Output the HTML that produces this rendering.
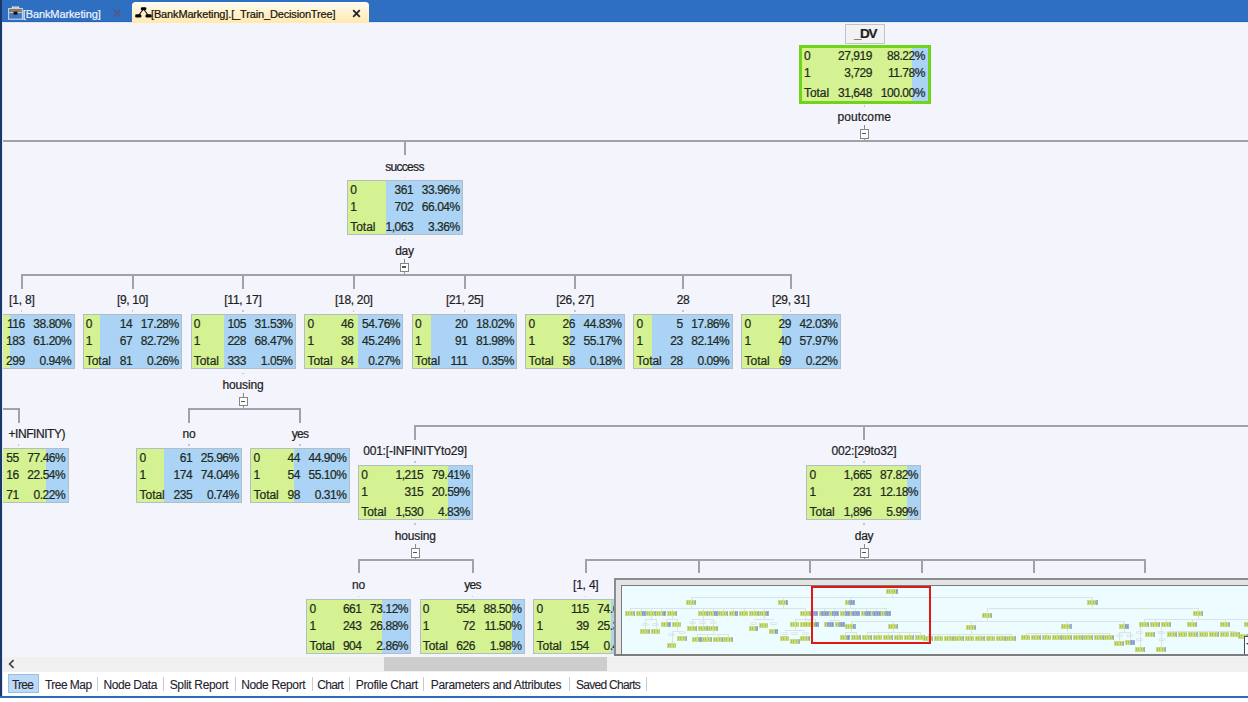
<!DOCTYPE html>
<html lang="en"><head><meta charset="utf-8"><title>[BankMarketing].[_Train_DecisionTree]</title>
<style>
html,body{margin:0;padding:0;}
body{width:1248px;height:702px;overflow:hidden;position:relative;background:#fff;font-family:"Liberation Sans", sans-serif;}
#app{position:absolute;left:0;top:0;width:1248px;height:702px;overflow:hidden;}
#app div,#app svg,#app span{position:absolute;}
#app span{white-space:nowrap;line-height:16px;height:16px;color:#1e1e1e;-webkit-text-stroke-width:0.22px;}
#app span.n{color:#1f2a1c;}
.cb{width:9.4px;height:9.4px;box-sizing:border-box;border:1.4px solid #868686;background:#fdfdfd;}
.cb i{position:absolute;left:1.2px;top:2.6px;width:4.2px;height:1.4px;background:#555;display:block;}
</style></head>
<body><div id="app">
<div style="left:0px;top:0px;width:1248px;height:702px;background:#ffffff;"></div>
<div style="left:3px;top:22px;width:1245px;height:635px;background:#f3f4fc;"></div>
<div style="left:3px;top:140px;width:1245px;height:2px;background:#a0a1a9;"></div>
<div style="left:404px;top:141px;width:2px;height:14px;background:#a0a1a9;"></div>
<div style="left:20.5px;top:274px;width:771.3px;height:2px;background:#a0a1a9;"></div>
<div style="left:20.5px;top:275px;width:2px;height:13.5px;background:#a0a1a9;"></div>
<div style="left:131.5px;top:275px;width:2px;height:13.5px;background:#a0a1a9;"></div>
<div style="left:242px;top:275px;width:2px;height:13.5px;background:#a0a1a9;"></div>
<div style="left:352.8px;top:275px;width:2px;height:13.5px;background:#a0a1a9;"></div>
<div style="left:463.7px;top:275px;width:2px;height:13.5px;background:#a0a1a9;"></div>
<div style="left:574px;top:275px;width:2px;height:13.5px;background:#a0a1a9;"></div>
<div style="left:682px;top:275px;width:2px;height:13.5px;background:#a0a1a9;"></div>
<div style="left:789.8px;top:275px;width:2px;height:13.5px;background:#a0a1a9;"></div>
<div style="left:188px;top:408px;width:113px;height:2px;background:#a0a1a9;"></div>
<div style="left:188px;top:409px;width:2px;height:13.5px;background:#a0a1a9;"></div>
<div style="left:299px;top:409px;width:2px;height:13.5px;background:#a0a1a9;"></div>
<div style="left:3px;top:408px;width:16.7px;height:2px;background:#a0a1a9;"></div>
<div style="left:17.7px;top:409px;width:2px;height:13.5px;background:#a0a1a9;"></div>
<div style="left:414px;top:425px;width:834px;height:2px;background:#a0a1a9;"></div>
<div style="left:414px;top:426px;width:2px;height:13.5px;background:#a0a1a9;"></div>
<div style="left:863px;top:426px;width:2px;height:13.5px;background:#a0a1a9;"></div>
<div style="left:357.5px;top:559px;width:116px;height:2px;background:#a0a1a9;"></div>
<div style="left:357.5px;top:560px;width:2px;height:13.3px;background:#a0a1a9;"></div>
<div style="left:471.5px;top:560px;width:2px;height:13.3px;background:#a0a1a9;"></div>
<div style="left:584.7px;top:559px;width:561.3px;height:2px;background:#a0a1a9;"></div>
<div style="left:584.7px;top:560px;width:2px;height:13.3px;background:#a0a1a9;"></div>
<div style="left:698px;top:560px;width:2px;height:13.3px;background:#a0a1a9;"></div>
<div style="left:809px;top:560px;width:2px;height:13.3px;background:#a0a1a9;"></div>
<div style="left:921px;top:560px;width:2px;height:13.3px;background:#a0a1a9;"></div>
<div style="left:1033px;top:560px;width:2px;height:13.3px;background:#a0a1a9;"></div>
<div style="left:1144px;top:560px;width:2px;height:13.3px;background:#a0a1a9;"></div>
<div style="left:845px;top:24px;width:40px;height:19.5px;background:#f2f2f2;box-sizing:border-box;border:1px solid #c4c4c8;"></div>
<div style="left:799px;top:45px;width:132px;height:59px;background:#d4f291;box-sizing:border-box;border:3px solid #6fd41a;background:linear-gradient(90deg,#d4f291 0,#d4f291 110px,#aad3f5 110px,#aad3f5 100%);"></div>
<div style="left:863.5px;top:125.3px;width:1.4px;height:4px;background:#8a8a8a;"></div>
<div style="left:863.5px;top:138.3px;width:1.4px;height:2px;background:#9a9a9a;"></div>
<div class="cb" style="left:859.5px;top:129.3px"><i></i></div>
<div style="left:347px;top:180px;width:116px;height:55px;background:#d4f291;box-sizing:border-box;border:1px solid #b2bec4;background:linear-gradient(90deg,#d4f291 0,#d4f291 38px,#aad3f5 38px,#aad3f5 100%);"></div>
<div style="left:404.1px;top:258.8px;width:1.4px;height:4px;background:#8a8a8a;"></div>
<div style="left:404.1px;top:271.8px;width:1.4px;height:2px;background:#9a9a9a;"></div>
<div class="cb" style="left:400.1px;top:262.8px"><i></i></div>
<div style="left:3px;top:314px;width:72px;height:55px;background:#d4f291;box-sizing:border-box;border:1px solid #b2bec4;border-left:none;background:linear-gradient(90deg,#d4f291 0,#d4f291 7px,#aad3f5 7px,#aad3f5 100%);"></div>
<div style="left:83px;top:314px;width:99px;height:55px;background:#d4f291;box-sizing:border-box;border:1px solid #b2bec4;background:linear-gradient(90deg,#d4f291 0,#d4f291 16px,#aad3f5 16px,#aad3f5 100%);"></div>
<div style="left:191px;top:314px;width:105px;height:55px;background:#d4f291;box-sizing:border-box;border:1px solid #b2bec4;background:linear-gradient(90deg,#d4f291 0,#d4f291 32px,#aad3f5 32px,#aad3f5 100%);"></div>
<div style="left:304px;top:314px;width:99px;height:55px;background:#d4f291;box-sizing:border-box;border:1px solid #b2bec4;background:linear-gradient(90deg,#d4f291 0,#d4f291 53px,#aad3f5 53px,#aad3f5 100%);"></div>
<div style="left:412px;top:314px;width:105px;height:55px;background:#d4f291;box-sizing:border-box;border:1px solid #b2bec4;background:linear-gradient(90deg,#d4f291 0,#d4f291 18px,#aad3f5 18px,#aad3f5 100%);"></div>
<div style="left:525px;top:314px;width:100px;height:55px;background:#d4f291;box-sizing:border-box;border:1px solid #b2bec4;background:linear-gradient(90deg,#d4f291 0,#d4f291 44px,#aad3f5 44px,#aad3f5 100%);"></div>
<div style="left:633px;top:314px;width:100px;height:55px;background:#d4f291;box-sizing:border-box;border:1px solid #b2bec4;background:linear-gradient(90deg,#d4f291 0,#d4f291 18px,#aad3f5 18px,#aad3f5 100%);"></div>
<div style="left:741px;top:314px;width:100px;height:55px;background:#d4f291;box-sizing:border-box;border:1px solid #b2bec4;background:linear-gradient(90deg,#d4f291 0,#d4f291 40px,#aad3f5 40px,#aad3f5 100%);"></div>
<div style="left:242.5px;top:393px;width:1.4px;height:4px;background:#8a8a8a;"></div>
<div style="left:242.5px;top:406px;width:1.4px;height:2px;background:#9a9a9a;"></div>
<div class="cb" style="left:238.5px;top:397px"><i></i></div>
<div style="left:3px;top:448px;width:66px;height:55px;background:#d4f291;box-sizing:border-box;border:1px solid #b2bec4;border-left:none;background:linear-gradient(90deg,#d4f291 0,#d4f291 43px,#aad3f5 43px,#aad3f5 100%);"></div>
<div style="left:136px;top:448px;width:106px;height:55px;background:#d4f291;box-sizing:border-box;border:1px solid #b2bec4;background:linear-gradient(90deg,#d4f291 0,#d4f291 27px,#aad3f5 27px,#aad3f5 100%);"></div>
<div style="left:250px;top:448px;width:100px;height:55px;background:#d4f291;box-sizing:border-box;border:1px solid #b2bec4;background:linear-gradient(90deg,#d4f291 0,#d4f291 43px,#aad3f5 43px,#aad3f5 100%);"></div>
<div style="left:358px;top:465px;width:115px;height:55px;background:#d4f291;box-sizing:border-box;border:1px solid #b2bec4;background:linear-gradient(90deg,#d4f291 0,#d4f291 89px,#aad3f5 89px,#aad3f5 100%);"></div>
<div style="left:414.7px;top:544.3px;width:1.4px;height:4px;background:#8a8a8a;"></div>
<div style="left:414.7px;top:557.3px;width:1.4px;height:2px;background:#9a9a9a;"></div>
<div class="cb" style="left:410.7px;top:548.3px"><i></i></div>
<div style="left:806px;top:465px;width:115px;height:55px;background:#d4f291;box-sizing:border-box;border:1px solid #b2bec4;background:linear-gradient(90deg,#d4f291 0,#d4f291 100px,#aad3f5 100px,#aad3f5 100%);"></div>
<div style="left:863.5px;top:544.3px;width:1.4px;height:4px;background:#8a8a8a;"></div>
<div style="left:863.5px;top:557.3px;width:1.4px;height:2px;background:#9a9a9a;"></div>
<div class="cb" style="left:859.5px;top:548.3px"><i></i></div>
<div style="left:306px;top:599px;width:105px;height:55px;background:#d4f291;box-sizing:border-box;border:1px solid #b2bec4;background:linear-gradient(90deg,#d4f291 0,#d4f291 75px,#aad3f5 75px,#aad3f5 100%);"></div>
<div style="left:420px;top:599px;width:105px;height:55px;background:#d4f291;box-sizing:border-box;border:1px solid #b2bec4;background:linear-gradient(90deg,#d4f291 0,#d4f291 91px,#aad3f5 91px,#aad3f5 100%);"></div>
<div style="left:533px;top:599px;width:106px;height:55px;background:#d4f291;box-sizing:border-box;border:1px solid #b2bec4;background:linear-gradient(90deg,#d4f291 0,#d4f291 77px,#aad3f5 77px,#aad3f5 100%);"></div>
<div style="left:863.8px;top:105px;width:1.4px;height:1.6px;background:#c3c5cf;"></div>
<div style="left:404.1px;top:176.5px;width:1.4px;height:1.6px;background:#c3c5cf;"></div>
<div style="left:404.1px;top:238.5px;width:1.4px;height:1.6px;background:#c3c5cf;"></div>
<div style="left:242.3px;top:372.5px;width:1.4px;height:1.6px;background:#c3c5cf;"></div>
<div style="left:414.3px;top:523px;width:1.4px;height:1.6px;background:#c3c5cf;"></div>
<div style="left:863.3px;top:523px;width:1.4px;height:1.6px;background:#c3c5cf;"></div>
<div style="left:21.1px;top:310.3px;width:1.4px;height:1.6px;background:#c3c5cf;"></div>
<div style="left:131.8px;top:310.3px;width:1.4px;height:1.6px;background:#c3c5cf;"></div>
<div style="left:242.3px;top:310.3px;width:1.4px;height:1.6px;background:#c3c5cf;"></div>
<div style="left:353.1px;top:310.3px;width:1.4px;height:1.6px;background:#c3c5cf;"></div>
<div style="left:464px;top:310.3px;width:1.4px;height:1.6px;background:#c3c5cf;"></div>
<div style="left:574.3px;top:310.3px;width:1.4px;height:1.6px;background:#c3c5cf;"></div>
<div style="left:682.3px;top:310.3px;width:1.4px;height:1.6px;background:#c3c5cf;"></div>
<div style="left:790.1px;top:310.3px;width:1.4px;height:1.6px;background:#c3c5cf;"></div>
<div style="left:18px;top:444.3px;width:1.4px;height:1.6px;background:#c3c5cf;"></div>
<div style="left:188.3px;top:444.3px;width:1.4px;height:1.6px;background:#c3c5cf;"></div>
<div style="left:299.3px;top:444.3px;width:1.4px;height:1.6px;background:#c3c5cf;"></div>
<div style="left:414.3px;top:461.3px;width:1.4px;height:1.6px;background:#c3c5cf;"></div>
<div style="left:863.3px;top:461.3px;width:1.4px;height:1.6px;background:#c3c5cf;"></div>
<div style="left:357.8px;top:595.8px;width:1.4px;height:1.6px;background:#c3c5cf;"></div>
<div style="left:471.8px;top:595.8px;width:1.4px;height:1.6px;background:#c3c5cf;"></div>
<div style="left:585.1px;top:595.8px;width:1.4px;height:1.6px;background:#c3c5cf;"></div>
<span class="t" style="left:854.0px;top:26.2px;font-size:13.5px;letter-spacing:-1.42px;font-weight:bold;">_DV</span>
<span class="n" style="left:804.0px;top:48.0px;font-size:12px;letter-spacing:-0.45px;">0</span>
<span class="n" style="left:838.0px;top:48.0px;font-size:12px;letter-spacing:-0.45px;">27,919</span>
<span class="n" style="left:887.0px;top:48.0px;font-size:12px;letter-spacing:-0.45px;">88.22%</span>
<span class="n" style="left:804.0px;top:64.9px;font-size:12px;letter-spacing:-0.45px;">1</span>
<span class="n" style="left:844.2px;top:64.9px;font-size:12px;letter-spacing:-0.45px;">3,729</span>
<span class="n" style="left:887.9px;top:64.9px;font-size:12px;letter-spacing:-0.45px;">11.78%</span>
<span class="n" style="left:804.0px;top:84.7px;font-size:12px;letter-spacing:-0.05px;">Total</span>
<span class="n" style="left:838.0px;top:84.7px;font-size:12px;letter-spacing:-0.45px;">31,648</span>
<span class="n" style="left:880.8px;top:84.7px;font-size:12px;letter-spacing:-0.45px;">100.00%</span>
<span class="t" style="left:837.5px;top:109.3px;font-size:12px;letter-spacing:0.10px;">poutcome</span>
<span class="t" style="left:385.2px;top:158.5px;font-size:12px;letter-spacing:-0.69px;">success</span>
<span class="n" style="left:350.3px;top:182.4px;font-size:12px;letter-spacing:-0.45px;">0</span>
<span class="n" style="left:394.6px;top:182.4px;font-size:12px;letter-spacing:-0.45px;">361</span>
<span class="n" style="left:421.8px;top:182.4px;font-size:12px;letter-spacing:-0.45px;">33.96%</span>
<span class="n" style="left:350.3px;top:199.3px;font-size:12px;letter-spacing:-0.45px;">1</span>
<span class="n" style="left:394.6px;top:199.3px;font-size:12px;letter-spacing:-0.45px;">702</span>
<span class="n" style="left:421.8px;top:199.3px;font-size:12px;letter-spacing:-0.45px;">66.04%</span>
<span class="n" style="left:350.3px;top:219.1px;font-size:12px;letter-spacing:-0.05px;">Total</span>
<span class="n" style="left:385.5px;top:219.1px;font-size:12px;letter-spacing:-0.45px;">1,063</span>
<span class="n" style="left:428.0px;top:219.1px;font-size:12px;letter-spacing:-0.45px;">3.36%</span>
<span class="t" style="left:395.2px;top:242.5px;font-size:12px;letter-spacing:-0.29px;">day</span>
<span class="t" style="left:9.1px;top:291.8px;font-size:12px;letter-spacing:-0.20px;">[1, 8]</span>
<span class="n" style="left:7.0px;top:316.4px;font-size:12px;letter-spacing:-0.45px;">116</span>
<span class="n" style="left:33.3px;top:316.4px;font-size:12px;letter-spacing:-0.45px;">38.80%</span>
<span class="n" style="left:6.1px;top:333.3px;font-size:12px;letter-spacing:-0.45px;">183</span>
<span class="n" style="left:33.3px;top:333.3px;font-size:12px;letter-spacing:-0.45px;">61.20%</span>
<span class="n" style="left:6.1px;top:353.1px;font-size:12px;letter-spacing:-0.45px;">299</span>
<span class="n" style="left:39.5px;top:353.1px;font-size:12px;letter-spacing:-0.45px;">0.94%</span>
<span class="t" style="left:117.0px;top:291.8px;font-size:12px;letter-spacing:-0.34px;">[9, 10]</span>
<span class="n" style="left:85.8px;top:316.4px;font-size:12px;letter-spacing:-0.45px;">0</span>
<span class="n" style="left:119.8px;top:316.4px;font-size:12px;letter-spacing:-0.45px;">14</span>
<span class="n" style="left:140.8px;top:316.4px;font-size:12px;letter-spacing:-0.45px;">17.28%</span>
<span class="n" style="left:85.8px;top:333.3px;font-size:12px;letter-spacing:-0.45px;">1</span>
<span class="n" style="left:119.8px;top:333.3px;font-size:12px;letter-spacing:-0.45px;">67</span>
<span class="n" style="left:140.8px;top:333.3px;font-size:12px;letter-spacing:-0.45px;">82.72%</span>
<span class="n" style="left:85.8px;top:353.1px;font-size:12px;letter-spacing:-0.05px;">Total</span>
<span class="n" style="left:119.8px;top:353.1px;font-size:12px;letter-spacing:-0.45px;">81</span>
<span class="n" style="left:147.0px;top:353.1px;font-size:12px;letter-spacing:-0.45px;">0.26%</span>
<span class="t" style="left:224.2px;top:291.8px;font-size:12px;letter-spacing:-0.21px;">[11, 17]</span>
<span class="n" style="left:193.8px;top:316.4px;font-size:12px;letter-spacing:-0.45px;">0</span>
<span class="n" style="left:227.4px;top:316.4px;font-size:12px;letter-spacing:-0.45px;">105</span>
<span class="n" style="left:254.6px;top:316.4px;font-size:12px;letter-spacing:-0.45px;">31.53%</span>
<span class="n" style="left:193.8px;top:333.3px;font-size:12px;letter-spacing:-0.45px;">1</span>
<span class="n" style="left:227.4px;top:333.3px;font-size:12px;letter-spacing:-0.45px;">228</span>
<span class="n" style="left:254.6px;top:333.3px;font-size:12px;letter-spacing:-0.45px;">68.47%</span>
<span class="n" style="left:193.8px;top:353.1px;font-size:12px;letter-spacing:-0.05px;">Total</span>
<span class="n" style="left:227.4px;top:353.1px;font-size:12px;letter-spacing:-0.45px;">333</span>
<span class="n" style="left:260.8px;top:353.1px;font-size:12px;letter-spacing:-0.45px;">1.05%</span>
<span class="t" style="left:335.1px;top:291.8px;font-size:12px;letter-spacing:-0.32px;">[18, 20]</span>
<span class="n" style="left:307.5px;top:316.4px;font-size:12px;letter-spacing:-0.45px;">0</span>
<span class="n" style="left:341.1px;top:316.4px;font-size:12px;letter-spacing:-0.45px;">46</span>
<span class="n" style="left:362.1px;top:316.4px;font-size:12px;letter-spacing:-0.45px;">54.76%</span>
<span class="n" style="left:307.5px;top:333.3px;font-size:12px;letter-spacing:-0.45px;">1</span>
<span class="n" style="left:341.1px;top:333.3px;font-size:12px;letter-spacing:-0.45px;">38</span>
<span class="n" style="left:362.1px;top:333.3px;font-size:12px;letter-spacing:-0.45px;">45.24%</span>
<span class="n" style="left:307.5px;top:353.1px;font-size:12px;letter-spacing:-0.05px;">Total</span>
<span class="n" style="left:341.1px;top:353.1px;font-size:12px;letter-spacing:-0.45px;">84</span>
<span class="n" style="left:368.3px;top:353.1px;font-size:12px;letter-spacing:-0.45px;">0.27%</span>
<span class="t" style="left:445.9px;top:291.8px;font-size:12px;letter-spacing:-0.32px;">[21, 25]</span>
<span class="n" style="left:415.0px;top:316.4px;font-size:12px;letter-spacing:-0.45px;">0</span>
<span class="n" style="left:455.0px;top:316.4px;font-size:12px;letter-spacing:-0.45px;">20</span>
<span class="n" style="left:476.0px;top:316.4px;font-size:12px;letter-spacing:-0.45px;">18.02%</span>
<span class="n" style="left:415.0px;top:333.3px;font-size:12px;letter-spacing:-0.45px;">1</span>
<span class="n" style="left:455.0px;top:333.3px;font-size:12px;letter-spacing:-0.45px;">91</span>
<span class="n" style="left:476.0px;top:333.3px;font-size:12px;letter-spacing:-0.45px;">81.98%</span>
<span class="n" style="left:415.0px;top:353.1px;font-size:12px;letter-spacing:-0.05px;">Total</span>
<span class="n" style="left:450.6px;top:353.1px;font-size:12px;letter-spacing:-0.45px;">111</span>
<span class="n" style="left:482.2px;top:353.1px;font-size:12px;letter-spacing:-0.45px;">0.35%</span>
<span class="t" style="left:556.2px;top:291.8px;font-size:12px;letter-spacing:-0.32px;">[26, 27]</span>
<span class="n" style="left:528.6px;top:316.4px;font-size:12px;letter-spacing:-0.45px;">0</span>
<span class="n" style="left:562.5px;top:316.4px;font-size:12px;letter-spacing:-0.45px;">26</span>
<span class="n" style="left:583.5px;top:316.4px;font-size:12px;letter-spacing:-0.45px;">44.83%</span>
<span class="n" style="left:528.6px;top:333.3px;font-size:12px;letter-spacing:-0.45px;">1</span>
<span class="n" style="left:562.5px;top:333.3px;font-size:12px;letter-spacing:-0.45px;">32</span>
<span class="n" style="left:583.5px;top:333.3px;font-size:12px;letter-spacing:-0.45px;">55.17%</span>
<span class="n" style="left:528.6px;top:353.1px;font-size:12px;letter-spacing:-0.05px;">Total</span>
<span class="n" style="left:562.5px;top:353.1px;font-size:12px;letter-spacing:-0.45px;">58</span>
<span class="n" style="left:589.7px;top:353.1px;font-size:12px;letter-spacing:-0.45px;">0.18%</span>
<span class="t" style="left:676.8px;top:291.8px;font-size:12px;letter-spacing:-0.43px;">28</span>
<span class="n" style="left:636.6px;top:316.4px;font-size:12px;letter-spacing:-0.45px;">0</span>
<span class="n" style="left:676.6px;top:316.4px;font-size:12px;letter-spacing:-0.45px;">5</span>
<span class="n" style="left:691.3px;top:316.4px;font-size:12px;letter-spacing:-0.45px;">17.86%</span>
<span class="n" style="left:636.6px;top:333.3px;font-size:12px;letter-spacing:-0.45px;">1</span>
<span class="n" style="left:670.3px;top:333.3px;font-size:12px;letter-spacing:-0.45px;">23</span>
<span class="n" style="left:691.3px;top:333.3px;font-size:12px;letter-spacing:-0.45px;">82.14%</span>
<span class="n" style="left:636.6px;top:353.1px;font-size:12px;letter-spacing:-0.05px;">Total</span>
<span class="n" style="left:670.3px;top:353.1px;font-size:12px;letter-spacing:-0.45px;">28</span>
<span class="n" style="left:697.5px;top:353.1px;font-size:12px;letter-spacing:-0.45px;">0.09%</span>
<span class="t" style="left:772.0px;top:291.8px;font-size:12px;letter-spacing:-0.32px;">[29, 31]</span>
<span class="n" style="left:744.6px;top:316.4px;font-size:12px;letter-spacing:-0.45px;">0</span>
<span class="n" style="left:778.6px;top:316.4px;font-size:12px;letter-spacing:-0.45px;">29</span>
<span class="n" style="left:799.6px;top:316.4px;font-size:12px;letter-spacing:-0.45px;">42.03%</span>
<span class="n" style="left:744.6px;top:333.3px;font-size:12px;letter-spacing:-0.45px;">1</span>
<span class="n" style="left:778.6px;top:333.3px;font-size:12px;letter-spacing:-0.45px;">40</span>
<span class="n" style="left:799.6px;top:333.3px;font-size:12px;letter-spacing:-0.45px;">57.97%</span>
<span class="n" style="left:744.6px;top:353.1px;font-size:12px;letter-spacing:-0.05px;">Total</span>
<span class="n" style="left:778.6px;top:353.1px;font-size:12px;letter-spacing:-0.45px;">69</span>
<span class="n" style="left:805.8px;top:353.1px;font-size:12px;letter-spacing:-0.45px;">0.22%</span>
<span class="t" style="left:222.5px;top:376.5px;font-size:12px;letter-spacing:-0.15px;">housing</span>
<span class="t" style="left:8.5px;top:425.6px;font-size:12px;letter-spacing:-0.45px;">+INFINITY)</span>
<span class="n" style="left:6.3px;top:450.4px;font-size:12px;letter-spacing:-0.45px;">55</span>
<span class="n" style="left:27.3px;top:450.4px;font-size:12px;letter-spacing:-0.45px;">77.46%</span>
<span class="n" style="left:6.3px;top:467.3px;font-size:12px;letter-spacing:-0.45px;">16</span>
<span class="n" style="left:27.3px;top:467.3px;font-size:12px;letter-spacing:-0.45px;">22.54%</span>
<span class="n" style="left:6.3px;top:487.1px;font-size:12px;letter-spacing:-0.45px;">71</span>
<span class="n" style="left:33.5px;top:487.1px;font-size:12px;letter-spacing:-0.45px;">0.22%</span>
<span class="t" style="left:182.5px;top:426.0px;font-size:12px;letter-spacing:-0.18px;">no</span>
<span class="n" style="left:139.6px;top:450.4px;font-size:12px;letter-spacing:-0.45px;">0</span>
<span class="n" style="left:179.8px;top:450.4px;font-size:12px;letter-spacing:-0.45px;">61</span>
<span class="n" style="left:200.8px;top:450.4px;font-size:12px;letter-spacing:-0.45px;">25.96%</span>
<span class="n" style="left:139.6px;top:467.3px;font-size:12px;letter-spacing:-0.45px;">1</span>
<span class="n" style="left:173.6px;top:467.3px;font-size:12px;letter-spacing:-0.45px;">174</span>
<span class="n" style="left:200.8px;top:467.3px;font-size:12px;letter-spacing:-0.45px;">74.04%</span>
<span class="n" style="left:139.6px;top:487.1px;font-size:12px;letter-spacing:-0.05px;">Total</span>
<span class="n" style="left:173.6px;top:487.1px;font-size:12px;letter-spacing:-0.45px;">235</span>
<span class="n" style="left:207.0px;top:487.1px;font-size:12px;letter-spacing:-0.45px;">0.74%</span>
<span class="t" style="left:291.8px;top:426.0px;font-size:12px;letter-spacing:-0.73px;">yes</span>
<span class="n" style="left:253.6px;top:450.4px;font-size:12px;letter-spacing:-0.45px;">0</span>
<span class="n" style="left:287.5px;top:450.4px;font-size:12px;letter-spacing:-0.45px;">44</span>
<span class="n" style="left:308.5px;top:450.4px;font-size:12px;letter-spacing:-0.45px;">44.90%</span>
<span class="n" style="left:253.6px;top:467.3px;font-size:12px;letter-spacing:-0.45px;">1</span>
<span class="n" style="left:287.5px;top:467.3px;font-size:12px;letter-spacing:-0.45px;">54</span>
<span class="n" style="left:308.5px;top:467.3px;font-size:12px;letter-spacing:-0.45px;">55.10%</span>
<span class="n" style="left:253.6px;top:487.1px;font-size:12px;letter-spacing:-0.05px;">Total</span>
<span class="n" style="left:287.5px;top:487.1px;font-size:12px;letter-spacing:-0.45px;">98</span>
<span class="n" style="left:314.7px;top:487.1px;font-size:12px;letter-spacing:-0.45px;">0.31%</span>
<span class="t" style="left:363.2px;top:442.8px;font-size:12px;letter-spacing:-0.20px;">001:[-INFINITYto29]</span>
<span class="n" style="left:361.3px;top:467.4px;font-size:12px;letter-spacing:-0.45px;">0</span>
<span class="n" style="left:395.5px;top:467.4px;font-size:12px;letter-spacing:-0.45px;">1,215</span>
<span class="n" style="left:431.8px;top:467.4px;font-size:12px;letter-spacing:-0.45px;">79.41%</span>
<span class="n" style="left:361.3px;top:484.3px;font-size:12px;letter-spacing:-0.45px;">1</span>
<span class="n" style="left:404.6px;top:484.3px;font-size:12px;letter-spacing:-0.45px;">315</span>
<span class="n" style="left:431.8px;top:484.3px;font-size:12px;letter-spacing:-0.45px;">20.59%</span>
<span class="n" style="left:361.3px;top:504.1px;font-size:12px;letter-spacing:-0.05px;">Total</span>
<span class="n" style="left:395.5px;top:504.1px;font-size:12px;letter-spacing:-0.45px;">1,530</span>
<span class="n" style="left:438.0px;top:504.1px;font-size:12px;letter-spacing:-0.45px;">4.83%</span>
<span class="t" style="left:394.8px;top:527.6px;font-size:12px;letter-spacing:-0.15px;">housing</span>
<span class="t" style="left:831.5px;top:442.8px;font-size:12px;letter-spacing:-0.14px;">002:[29to32]</span>
<span class="n" style="left:809.6px;top:467.4px;font-size:12px;letter-spacing:-0.45px;">0</span>
<span class="n" style="left:843.8px;top:467.4px;font-size:12px;letter-spacing:-0.45px;">1,665</span>
<span class="n" style="left:880.1px;top:467.4px;font-size:12px;letter-spacing:-0.45px;">87.82%</span>
<span class="n" style="left:809.6px;top:484.3px;font-size:12px;letter-spacing:-0.45px;">1</span>
<span class="n" style="left:852.9px;top:484.3px;font-size:12px;letter-spacing:-0.45px;">231</span>
<span class="n" style="left:880.1px;top:484.3px;font-size:12px;letter-spacing:-0.45px;">12.18%</span>
<span class="n" style="left:809.6px;top:504.1px;font-size:12px;letter-spacing:-0.05px;">Total</span>
<span class="n" style="left:843.8px;top:504.1px;font-size:12px;letter-spacing:-0.45px;">1,896</span>
<span class="n" style="left:886.3px;top:504.1px;font-size:12px;letter-spacing:-0.45px;">5.99%</span>
<span class="t" style="left:854.8px;top:527.6px;font-size:12px;letter-spacing:-0.29px;">day</span>
<span class="t" style="left:352.0px;top:577.0px;font-size:12px;letter-spacing:-0.18px;">no</span>
<span class="n" style="left:309.5px;top:601.4px;font-size:12px;letter-spacing:-0.45px;">0</span>
<span class="n" style="left:342.9px;top:601.4px;font-size:12px;letter-spacing:-0.45px;">661</span>
<span class="n" style="left:370.1px;top:601.4px;font-size:12px;letter-spacing:-0.45px;">73.12%</span>
<span class="n" style="left:309.5px;top:618.3px;font-size:12px;letter-spacing:-0.45px;">1</span>
<span class="n" style="left:342.9px;top:618.3px;font-size:12px;letter-spacing:-0.45px;">243</span>
<span class="n" style="left:370.1px;top:618.3px;font-size:12px;letter-spacing:-0.45px;">26.88%</span>
<span class="n" style="left:309.5px;top:638.1px;font-size:12px;letter-spacing:-0.05px;">Total</span>
<span class="n" style="left:342.9px;top:638.1px;font-size:12px;letter-spacing:-0.45px;">904</span>
<span class="n" style="left:376.3px;top:638.1px;font-size:12px;letter-spacing:-0.45px;">2.86%</span>
<span class="t" style="left:464.2px;top:577.0px;font-size:12px;letter-spacing:-0.73px;">yes</span>
<span class="n" style="left:422.8px;top:601.4px;font-size:12px;letter-spacing:-0.45px;">0</span>
<span class="n" style="left:456.3px;top:601.4px;font-size:12px;letter-spacing:-0.45px;">554</span>
<span class="n" style="left:483.5px;top:601.4px;font-size:12px;letter-spacing:-0.45px;">88.50%</span>
<span class="n" style="left:422.8px;top:618.3px;font-size:12px;letter-spacing:-0.45px;">1</span>
<span class="n" style="left:462.5px;top:618.3px;font-size:12px;letter-spacing:-0.45px;">72</span>
<span class="n" style="left:484.4px;top:618.3px;font-size:12px;letter-spacing:-0.45px;">11.50%</span>
<span class="n" style="left:422.8px;top:638.1px;font-size:12px;letter-spacing:-0.05px;">Total</span>
<span class="n" style="left:456.3px;top:638.1px;font-size:12px;letter-spacing:-0.45px;">626</span>
<span class="n" style="left:489.7px;top:638.1px;font-size:12px;letter-spacing:-0.45px;">1.98%</span>
<span class="t" style="left:573.0px;top:577.0px;font-size:12px;letter-spacing:-0.20px;">[1, 4]</span>
<span class="n" style="left:536.6px;top:601.4px;font-size:12px;letter-spacing:-0.45px;">0</span>
<span class="n" style="left:571.0px;top:601.4px;font-size:12px;letter-spacing:-0.45px;">115</span>
<span class="n" style="left:597.3px;top:601.4px;font-size:12px;letter-spacing:-0.45px;">74.68%</span>
<span class="n" style="left:536.6px;top:618.3px;font-size:12px;letter-spacing:-0.45px;">1</span>
<span class="n" style="left:576.3px;top:618.3px;font-size:12px;letter-spacing:-0.45px;">39</span>
<span class="n" style="left:597.3px;top:618.3px;font-size:12px;letter-spacing:-0.45px;">25.32%</span>
<span class="n" style="left:536.6px;top:638.1px;font-size:12px;letter-spacing:-0.05px;">Total</span>
<span class="n" style="left:570.1px;top:638.1px;font-size:12px;letter-spacing:-0.45px;">154</span>
<span class="n" style="left:603.5px;top:638.1px;font-size:12px;letter-spacing:-0.45px;">0.49%</span>
<div style="left:614px;top:578px;width:640px;height:78px;background:#e4e4e4;box-sizing:border-box;border:2px solid #8c8c8c;"></div>
<div style="left:620.6px;top:584.8px;width:630px;height:71px;background:#edfdff;box-sizing:border-box;border:1.6px solid #7a7a7a;"></div>
<div style="left:886.2px;top:589.1px;width:11.5px;height:5.2px;background:#c8dd70;background:repeating-linear-gradient(90deg,rgba(70,90,30,.28) 0,rgba(70,90,30,.28) 1px,transparent 1px,transparent 2.3px) 50% 50%/84% 56% no-repeat,linear-gradient(90deg,#c8dd70 0,#c8dd70 10.1px,#8fa8d8 10.1px,#8fa8d8 100%);opacity:.92;"></div>
<div style="left:892px;top:594px;width:1px;height:3px;background:#dae3e7;"></div>
<div style="left:691.3px;top:597px;width:401.1px;height:1px;background:#dae3e7;"></div>
<div style="left:691.3px;top:597px;width:1px;height:3px;background:#dae3e7;"></div>
<div style="left:686.1px;top:600.1px;width:10.4px;height:5px;background:#c8dd70;background:repeating-linear-gradient(90deg,rgba(70,90,30,.28) 0,rgba(70,90,30,.28) 1px,transparent 1px,transparent 2.3px) 50% 50%/84% 56% no-repeat,linear-gradient(90deg,#c8dd70 0,#c8dd70 8.8px,#8fa8d8 8.8px,#8fa8d8 100%);opacity:.92;"></div>
<div style="left:691.3px;top:605px;width:1px;height:3px;background:#dae3e7;"></div>
<div style="left:783.3px;top:597px;width:1px;height:3px;background:#dae3e7;"></div>
<div style="left:778.1px;top:600.1px;width:10.4px;height:5px;background:#c8dd70;background:repeating-linear-gradient(90deg,rgba(70,90,30,.28) 0,rgba(70,90,30,.28) 1px,transparent 1px,transparent 2.3px) 50% 50%/84% 56% no-repeat,linear-gradient(90deg,#c8dd70 0,#c8dd70 8.3px,#8fa8d8 8.3px,#8fa8d8 100%);opacity:.92;"></div>
<div style="left:783.3px;top:605px;width:1px;height:3px;background:#dae3e7;"></div>
<div style="left:849.7px;top:597px;width:1px;height:3px;background:#dae3e7;"></div>
<div style="left:844.5px;top:600.1px;width:10.4px;height:5px;background:#c8dd70;background:repeating-linear-gradient(90deg,rgba(70,90,30,.28) 0,rgba(70,90,30,.28) 1px,transparent 1px,transparent 2.3px) 50% 50%/84% 56% no-repeat,linear-gradient(90deg,#c8dd70 0,#c8dd70 3.6px,#8fa8d8 3.6px,#8fa8d8 100%);opacity:.92;"></div>
<div style="left:849.7px;top:605px;width:1px;height:3px;background:#dae3e7;"></div>
<div style="left:1092.4px;top:597px;width:1px;height:3px;background:#dae3e7;"></div>
<div style="left:1087.2px;top:600.1px;width:10.4px;height:5px;background:#c8dd70;background:repeating-linear-gradient(90deg,rgba(70,90,30,.28) 0,rgba(70,90,30,.28) 1px,transparent 1px,transparent 2.3px) 50% 50%/84% 56% no-repeat,linear-gradient(90deg,#c8dd70 0,#c8dd70 9.2px,#8fa8d8 9.2px,#8fa8d8 100%);opacity:.92;"></div>
<div style="left:1092.4px;top:605px;width:1px;height:3px;background:#dae3e7;"></div>
<div style="left:630px;top:608px;width:134px;height:1px;background:#dae3e7;"></div>
<div style="left:630.2px;top:608px;width:1px;height:3px;background:#dae3e7;"></div>
<div style="left:625.3px;top:611.3px;width:9.8px;height:5px;background:#c8dd70;background:repeating-linear-gradient(90deg,rgba(70,90,30,.28) 0,rgba(70,90,30,.28) 1px,transparent 1px,transparent 2.3px) 50% 50%/84% 56% no-repeat,linear-gradient(90deg,#c8dd70 0,#c8dd70 8.8px,#8fa8d8 8.8px,#8fa8d8 100%);opacity:.92;"></div>
<div style="left:640.7px;top:608px;width:1px;height:3px;background:#dae3e7;"></div>
<div style="left:635.8px;top:611.3px;width:9.8px;height:5px;background:#c8dd70;background:repeating-linear-gradient(90deg,rgba(70,90,30,.28) 0,rgba(70,90,30,.28) 1px,transparent 1px,transparent 2.3px) 50% 50%/84% 56% no-repeat,linear-gradient(90deg,#c8dd70 0,#c8dd70 6.4px,#8fa8d8 6.4px,#8fa8d8 100%);opacity:.92;"></div>
<div style="left:650.8px;top:608px;width:1px;height:3px;background:#dae3e7;"></div>
<div style="left:645.9px;top:611.3px;width:9.8px;height:5px;background:#c8dd70;background:repeating-linear-gradient(90deg,rgba(70,90,30,.28) 0,rgba(70,90,30,.28) 1px,transparent 1px,transparent 2.3px) 50% 50%/84% 56% no-repeat,linear-gradient(90deg,#c8dd70 0,#c8dd70 8.8px,#8fa8d8 8.8px,#8fa8d8 100%);opacity:.92;"></div>
<div style="left:661.3px;top:608px;width:1px;height:3px;background:#dae3e7;"></div>
<div style="left:656.4px;top:611.3px;width:9.8px;height:5px;background:#c8dd70;background:repeating-linear-gradient(90deg,rgba(70,90,30,.28) 0,rgba(70,90,30,.28) 1px,transparent 1px,transparent 2.3px) 50% 50%/84% 56% no-repeat,linear-gradient(90deg,#c8dd70 0,#c8dd70 6.9px,#8fa8d8 6.9px,#8fa8d8 100%);opacity:.92;"></div>
<div style="left:672px;top:608px;width:1px;height:3px;background:#dae3e7;"></div>
<div style="left:667.1px;top:611.3px;width:9.8px;height:5px;background:#c8dd70;background:repeating-linear-gradient(90deg,rgba(70,90,30,.28) 0,rgba(70,90,30,.28) 1px,transparent 1px,transparent 2.3px) 50% 50%/84% 56% no-repeat,linear-gradient(90deg,#c8dd70 0,#c8dd70 8.8px,#8fa8d8 8.8px,#8fa8d8 100%);opacity:.92;"></div>
<div style="left:702.8px;top:608px;width:1px;height:3px;background:#dae3e7;"></div>
<div style="left:697.9px;top:611.3px;width:9.8px;height:5px;background:#c8dd70;background:repeating-linear-gradient(90deg,rgba(70,90,30,.28) 0,rgba(70,90,30,.28) 1px,transparent 1px,transparent 2.3px) 50% 50%/84% 56% no-repeat,linear-gradient(90deg,#c8dd70 0,#c8dd70 8.8px,#8fa8d8 8.8px,#8fa8d8 100%);opacity:.92;"></div>
<div style="left:713px;top:608px;width:1px;height:3px;background:#dae3e7;"></div>
<div style="left:708.1px;top:611.3px;width:9.8px;height:5px;background:#c8dd70;background:repeating-linear-gradient(90deg,rgba(70,90,30,.28) 0,rgba(70,90,30,.28) 1px,transparent 1px,transparent 2.3px) 50% 50%/84% 56% no-repeat,linear-gradient(90deg,#c8dd70 0,#c8dd70 6.4px,#8fa8d8 6.4px,#8fa8d8 100%);opacity:.92;"></div>
<div style="left:723.2px;top:608px;width:1px;height:3px;background:#dae3e7;"></div>
<div style="left:718.3px;top:611.3px;width:9.8px;height:5px;background:#c8dd70;background:repeating-linear-gradient(90deg,rgba(70,90,30,.28) 0,rgba(70,90,30,.28) 1px,transparent 1px,transparent 2.3px) 50% 50%/84% 56% no-repeat,linear-gradient(90deg,#c8dd70 0,#c8dd70 8.8px,#8fa8d8 8.8px,#8fa8d8 100%);opacity:.92;"></div>
<div style="left:733.4px;top:608px;width:1px;height:3px;background:#dae3e7;"></div>
<div style="left:728.5px;top:611.3px;width:9.8px;height:5px;background:#c8dd70;background:repeating-linear-gradient(90deg,rgba(70,90,30,.28) 0,rgba(70,90,30,.28) 1px,transparent 1px,transparent 2.3px) 50% 50%/84% 56% no-repeat,linear-gradient(90deg,#c8dd70 0,#c8dd70 6.4px,#8fa8d8 6.4px,#8fa8d8 100%);opacity:.92;"></div>
<div style="left:743.6px;top:608px;width:1px;height:3px;background:#dae3e7;"></div>
<div style="left:738.7px;top:611.3px;width:9.8px;height:5px;background:#c8dd70;background:repeating-linear-gradient(90deg,rgba(70,90,30,.28) 0,rgba(70,90,30,.28) 1px,transparent 1px,transparent 2.3px) 50% 50%/84% 56% no-repeat,linear-gradient(90deg,#c8dd70 0,#c8dd70 8.8px,#8fa8d8 8.8px,#8fa8d8 100%);opacity:.92;"></div>
<div style="left:754px;top:608px;width:1px;height:3px;background:#dae3e7;"></div>
<div style="left:749.1px;top:611.3px;width:9.8px;height:5px;background:#c8dd70;background:repeating-linear-gradient(90deg,rgba(70,90,30,.28) 0,rgba(70,90,30,.28) 1px,transparent 1px,transparent 2.3px) 50% 50%/84% 56% no-repeat,linear-gradient(90deg,#c8dd70 0,#c8dd70 8.8px,#8fa8d8 8.8px,#8fa8d8 100%);opacity:.92;"></div>
<div style="left:764px;top:608px;width:1px;height:3px;background:#dae3e7;"></div>
<div style="left:759.1px;top:611.3px;width:9.8px;height:5px;background:#c8dd70;background:repeating-linear-gradient(90deg,rgba(70,90,30,.28) 0,rgba(70,90,30,.28) 1px,transparent 1px,transparent 2.3px) 50% 50%/84% 56% no-repeat,linear-gradient(90deg,#c8dd70 0,#c8dd70 6.9px,#8fa8d8 6.9px,#8fa8d8 100%);opacity:.92;"></div>
<div style="left:650.8px;top:616.3px;width:1px;height:2.7px;background:#dae3e7;"></div>
<div style="left:645px;top:619px;width:10.5px;height:1px;background:#dae3e7;"></div>
<div style="left:645px;top:619px;width:1px;height:10.3px;background:#dae3e7;"></div>
<div style="left:640.1px;top:629.3px;width:9.8px;height:5px;background:#c8dd70;background:repeating-linear-gradient(90deg,rgba(70,90,30,.28) 0,rgba(70,90,30,.28) 1px,transparent 1px,transparent 2.3px) 50% 50%/84% 56% no-repeat,linear-gradient(90deg,#c8dd70 0,#c8dd70 8.8px,#8fa8d8 8.8px,#8fa8d8 100%);opacity:.92;"></div>
<div style="left:655.5px;top:619px;width:1px;height:10.3px;background:#dae3e7;"></div>
<div style="left:650.6px;top:629.3px;width:9.8px;height:5px;background:#c8dd70;background:repeating-linear-gradient(90deg,rgba(70,90,30,.28) 0,rgba(70,90,30,.28) 1px,transparent 1px,transparent 2.3px) 50% 50%/84% 56% no-repeat,linear-gradient(90deg,#c8dd70 0,#c8dd70 8.8px,#8fa8d8 8.8px,#8fa8d8 100%);opacity:.92;"></div>
<div style="left:672px;top:616.3px;width:1px;height:2.7px;background:#dae3e7;"></div>
<div style="left:666px;top:619px;width:10.5px;height:1px;background:#dae3e7;"></div>
<div style="left:666px;top:619px;width:1px;height:3.3px;background:#dae3e7;"></div>
<div style="left:661.1px;top:622.3px;width:9.8px;height:5px;background:#c8dd70;background:repeating-linear-gradient(90deg,rgba(70,90,30,.28) 0,rgba(70,90,30,.28) 1px,transparent 1px,transparent 2.3px) 50% 50%/84% 56% no-repeat,linear-gradient(90deg,#c8dd70 0,#c8dd70 6.9px,#8fa8d8 6.9px,#8fa8d8 100%);opacity:.92;"></div>
<div style="left:676.5px;top:619px;width:1px;height:3.3px;background:#dae3e7;"></div>
<div style="left:671.6px;top:622.3px;width:9.8px;height:5px;background:#c8dd70;background:repeating-linear-gradient(90deg,rgba(70,90,30,.28) 0,rgba(70,90,30,.28) 1px,transparent 1px,transparent 2.3px) 50% 50%/84% 56% no-repeat,linear-gradient(90deg,#c8dd70 0,#c8dd70 8.8px,#8fa8d8 8.8px,#8fa8d8 100%);opacity:.92;"></div>
<div style="left:641.5px;top:622.5px;width:7px;height:3px;background:transparent;border:1px solid #dde5e8;border-radius:50%;box-sizing:border-box;"></div>
<div style="left:652px;top:622.5px;width:7px;height:3px;background:transparent;border:1px solid #dde5e8;border-radius:50%;box-sizing:border-box;"></div>
<div style="left:668px;top:632.5px;width:7px;height:3px;background:transparent;border:1px solid #dde5e8;border-radius:50%;box-sizing:border-box;"></div>
<div style="left:678.5px;top:630.5px;width:7px;height:3px;background:transparent;border:1px solid #dde5e8;border-radius:50%;box-sizing:border-box;"></div>
<div style="left:688.5px;top:620.5px;width:7px;height:3px;background:transparent;border:1px solid #dde5e8;border-radius:50%;box-sizing:border-box;"></div>
<div style="left:699.3px;top:620.5px;width:7px;height:3px;background:transparent;border:1px solid #dde5e8;border-radius:50%;box-sizing:border-box;"></div>
<div style="left:709.5px;top:620.5px;width:7px;height:3px;background:transparent;border:1px solid #dde5e8;border-radius:50%;box-sizing:border-box;"></div>
<div style="left:750px;top:621.5px;width:7px;height:3px;background:transparent;border:1px solid #dde5e8;border-radius:50%;box-sizing:border-box;"></div>
<div style="left:770px;top:621.5px;width:7px;height:3px;background:transparent;border:1px solid #dde5e8;border-radius:50%;box-sizing:border-box;"></div>
<div style="left:781px;top:631.5px;width:7px;height:3px;background:transparent;border:1px solid #dde5e8;border-radius:50%;box-sizing:border-box;"></div>
<div style="left:791px;top:631.5px;width:7px;height:3px;background:transparent;border:1px solid #dde5e8;border-radius:50%;box-sizing:border-box;"></div>
<div style="left:801.5px;top:631.5px;width:7px;height:3px;background:transparent;border:1px solid #dde5e8;border-radius:50%;box-sizing:border-box;"></div>
<div style="left:676.5px;top:627.3px;width:1px;height:3.7px;background:#dae3e7;"></div>
<div style="left:671.5px;top:631px;width:10.5px;height:1px;background:#dae3e7;"></div>
<div style="left:677.1px;top:636px;width:9.8px;height:5px;background:#c8dd70;background:repeating-linear-gradient(90deg,rgba(70,90,30,.28) 0,rgba(70,90,30,.28) 1px,transparent 1px,transparent 2.3px) 50% 50%/84% 56% no-repeat,linear-gradient(90deg,#c8dd70 0,#c8dd70 8.8px,#8fa8d8 8.8px,#8fa8d8 100%);opacity:.92;"></div>
<div style="left:671.5px;top:631px;width:1px;height:12px;background:#dae3e7;"></div>
<div style="left:666.6px;top:643px;width:9.8px;height:5px;background:#c8dd70;background:repeating-linear-gradient(90deg,rgba(70,90,30,.28) 0,rgba(70,90,30,.28) 1px,transparent 1px,transparent 2.3px) 50% 50%/84% 56% no-repeat,linear-gradient(90deg,#c8dd70 0,#c8dd70 8.8px,#8fa8d8 8.8px,#8fa8d8 100%);opacity:.92;"></div>
<div style="left:702.8px;top:616.3px;width:1px;height:2.7px;background:#dae3e7;"></div>
<div style="left:692px;top:619px;width:21px;height:1px;background:#dae3e7;"></div>
<div style="left:692px;top:619px;width:1px;height:7px;background:#dae3e7;"></div>
<div style="left:687.1px;top:626.3px;width:9.8px;height:5px;background:#c8dd70;background:repeating-linear-gradient(90deg,rgba(70,90,30,.28) 0,rgba(70,90,30,.28) 1px,transparent 1px,transparent 2.3px) 50% 50%/84% 56% no-repeat,linear-gradient(90deg,#c8dd70 0,#c8dd70 8.8px,#8fa8d8 8.8px,#8fa8d8 100%);opacity:.92;"></div>
<div style="left:702.8px;top:619px;width:1px;height:7px;background:#dae3e7;"></div>
<div style="left:697.9px;top:626.3px;width:9.8px;height:5px;background:#c8dd70;background:repeating-linear-gradient(90deg,rgba(70,90,30,.28) 0,rgba(70,90,30,.28) 1px,transparent 1px,transparent 2.3px) 50% 50%/84% 56% no-repeat,linear-gradient(90deg,#c8dd70 0,#c8dd70 8.8px,#8fa8d8 8.8px,#8fa8d8 100%);opacity:.92;"></div>
<div style="left:713px;top:619px;width:1px;height:7px;background:#dae3e7;"></div>
<div style="left:708.1px;top:626.3px;width:9.8px;height:5px;background:#c8dd70;background:repeating-linear-gradient(90deg,rgba(70,90,30,.28) 0,rgba(70,90,30,.28) 1px,transparent 1px,transparent 2.3px) 50% 50%/84% 56% no-repeat,linear-gradient(90deg,#c8dd70 0,#c8dd70 8.8px,#8fa8d8 8.8px,#8fa8d8 100%);opacity:.92;"></div>
<div style="left:713px;top:631.3px;width:1px;height:2.7px;background:#dae3e7;"></div>
<div style="left:697px;top:634px;width:31px;height:1px;background:#dae3e7;"></div>
<div style="left:697px;top:634px;width:1px;height:3px;background:#dae3e7;"></div>
<div style="left:692.1px;top:637.3px;width:9.8px;height:5px;background:#c8dd70;background:repeating-linear-gradient(90deg,rgba(70,90,30,.28) 0,rgba(70,90,30,.28) 1px,transparent 1px,transparent 2.3px) 50% 50%/84% 56% no-repeat,linear-gradient(90deg,#c8dd70 0,#c8dd70 6.9px,#8fa8d8 6.9px,#8fa8d8 100%);opacity:.92;"></div>
<div style="left:707.3px;top:634px;width:1px;height:3px;background:#dae3e7;"></div>
<div style="left:702.4px;top:637.3px;width:9.8px;height:5px;background:#c8dd70;background:repeating-linear-gradient(90deg,rgba(70,90,30,.28) 0,rgba(70,90,30,.28) 1px,transparent 1px,transparent 2.3px) 50% 50%/84% 56% no-repeat,linear-gradient(90deg,#c8dd70 0,#c8dd70 8.8px,#8fa8d8 8.8px,#8fa8d8 100%);opacity:.92;"></div>
<div style="left:717.8px;top:634px;width:1px;height:3px;background:#dae3e7;"></div>
<div style="left:712.9px;top:637.3px;width:9.8px;height:5px;background:#c8dd70;background:repeating-linear-gradient(90deg,rgba(70,90,30,.28) 0,rgba(70,90,30,.28) 1px,transparent 1px,transparent 2.3px) 50% 50%/84% 56% no-repeat,linear-gradient(90deg,#c8dd70 0,#c8dd70 8.8px,#8fa8d8 8.8px,#8fa8d8 100%);opacity:.92;"></div>
<div style="left:728px;top:634px;width:1px;height:3px;background:#dae3e7;"></div>
<div style="left:723.1px;top:637.3px;width:9.8px;height:5px;background:#c8dd70;background:repeating-linear-gradient(90deg,rgba(70,90,30,.28) 0,rgba(70,90,30,.28) 1px,transparent 1px,transparent 2.3px) 50% 50%/84% 56% no-repeat,linear-gradient(90deg,#c8dd70 0,#c8dd70 8.8px,#8fa8d8 8.8px,#8fa8d8 100%);opacity:.92;"></div>
<div style="left:764px;top:616.3px;width:1px;height:2.7px;background:#dae3e7;"></div>
<div style="left:753.5px;top:619px;width:20px;height:1px;background:#dae3e7;"></div>
<div style="left:748.6px;top:626.3px;width:9.8px;height:5px;background:#c8dd70;background:repeating-linear-gradient(90deg,rgba(70,90,30,.28) 0,rgba(70,90,30,.28) 1px,transparent 1px,transparent 2.3px) 50% 50%/84% 56% no-repeat,linear-gradient(90deg,#c8dd70 0,#c8dd70 6.9px,#8fa8d8 6.9px,#8fa8d8 100%);opacity:.92;"></div>
<div style="left:758.6px;top:623.3px;width:9.8px;height:5px;background:#c8dd70;background:repeating-linear-gradient(90deg,rgba(70,90,30,.28) 0,rgba(70,90,30,.28) 1px,transparent 1px,transparent 2.3px) 50% 50%/84% 56% no-repeat,linear-gradient(90deg,#c8dd70 0,#c8dd70 8.8px,#8fa8d8 8.8px,#8fa8d8 100%);opacity:.92;"></div>
<div style="left:768.6px;top:629.3px;width:9.8px;height:5px;background:#c8dd70;background:repeating-linear-gradient(90deg,rgba(70,90,30,.28) 0,rgba(70,90,30,.28) 1px,transparent 1px,transparent 2.3px) 50% 50%/84% 56% no-repeat,linear-gradient(90deg,#c8dd70 0,#c8dd70 5.9px,#8fa8d8 5.9px,#8fa8d8 100%);opacity:.92;"></div>
<div style="left:764px;top:608px;width:40.5px;height:1px;background:#dae3e7;"></div>
<div style="left:804.5px;top:608px;width:1px;height:3px;background:#dae3e7;"></div>
<div style="left:799.6px;top:611.3px;width:9.8px;height:5px;background:#c8dd70;background:repeating-linear-gradient(90deg,rgba(70,90,30,.28) 0,rgba(70,90,30,.28) 1px,transparent 1px,transparent 2.3px) 50% 50%/84% 56% no-repeat,linear-gradient(90deg,#c8dd70 0,#c8dd70 8.8px,#8fa8d8 8.8px,#8fa8d8 100%);opacity:.92;"></div>
<div style="left:804.5px;top:616.3px;width:1px;height:2.7px;background:#dae3e7;"></div>
<div style="left:794.5px;top:619px;width:20px;height:1px;background:#dae3e7;"></div>
<div style="left:794.5px;top:619px;width:1px;height:3px;background:#dae3e7;"></div>
<div style="left:789.6px;top:622.3px;width:9.8px;height:5px;background:#c8dd70;background:repeating-linear-gradient(90deg,rgba(70,90,30,.28) 0,rgba(70,90,30,.28) 1px,transparent 1px,transparent 2.3px) 50% 50%/84% 56% no-repeat,linear-gradient(90deg,#c8dd70 0,#c8dd70 8.8px,#8fa8d8 8.8px,#8fa8d8 100%);opacity:.92;"></div>
<div style="left:804.5px;top:619px;width:1px;height:3px;background:#dae3e7;"></div>
<div style="left:799.6px;top:622.3px;width:9.8px;height:5px;background:#c8dd70;background:repeating-linear-gradient(90deg,rgba(70,90,30,.28) 0,rgba(70,90,30,.28) 1px,transparent 1px,transparent 2.3px) 50% 50%/84% 56% no-repeat,linear-gradient(90deg,#c8dd70 0,#c8dd70 8.8px,#8fa8d8 8.8px,#8fa8d8 100%);opacity:.92;"></div>
<div style="left:814.5px;top:619px;width:1px;height:3px;background:#dae3e7;"></div>
<div style="left:809.6px;top:622.3px;width:9.8px;height:5px;background:#c8dd70;background:repeating-linear-gradient(90deg,rgba(70,90,30,.28) 0,rgba(70,90,30,.28) 1px,transparent 1px,transparent 2.3px) 50% 50%/84% 56% no-repeat,linear-gradient(90deg,#c8dd70 0,#c8dd70 6.4px,#8fa8d8 6.4px,#8fa8d8 100%);opacity:.92;"></div>
<div style="left:794.5px;top:627.3px;width:1px;height:2.7px;background:#dae3e7;"></div>
<div style="left:784.5px;top:630px;width:20.5px;height:1px;background:#dae3e7;"></div>
<div style="left:779.6px;top:636px;width:9.8px;height:5px;background:#c8dd70;background:repeating-linear-gradient(90deg,rgba(70,90,30,.28) 0,rgba(70,90,30,.28) 1px,transparent 1px,transparent 2.3px) 50% 50%/84% 56% no-repeat,linear-gradient(90deg,#c8dd70 0,#c8dd70 8.8px,#8fa8d8 8.8px,#8fa8d8 100%);opacity:.92;"></div>
<div style="left:789.9px;top:638.9px;width:9.8px;height:5px;background:#c8dd70;background:repeating-linear-gradient(90deg,rgba(70,90,30,.28) 0,rgba(70,90,30,.28) 1px,transparent 1px,transparent 2.3px) 50% 50%/84% 56% no-repeat,linear-gradient(90deg,#c8dd70 0,#c8dd70 8.8px,#8fa8d8 8.8px,#8fa8d8 100%);opacity:.92;"></div>
<div style="left:800.1px;top:636px;width:9.8px;height:5px;background:#c8dd70;background:repeating-linear-gradient(90deg,rgba(70,90,30,.28) 0,rgba(70,90,30,.28) 1px,transparent 1px,transparent 2.3px) 50% 50%/84% 56% no-repeat,linear-gradient(90deg,#c8dd70 0,#c8dd70 8.8px,#8fa8d8 8.8px,#8fa8d8 100%);opacity:.92;"></div>
<div style="left:813.3px;top:608px;width:72.9px;height:1px;background:#dae3e7;"></div>
<div style="left:813.3px;top:608px;width:1px;height:3px;background:#dae3e7;"></div>
<div style="left:808.4px;top:611.3px;width:9.8px;height:5px;background:#c8dd70;background:repeating-linear-gradient(90deg,rgba(70,90,30,.28) 0,rgba(70,90,30,.28) 1px,transparent 1px,transparent 2.3px) 50% 50%/84% 56% no-repeat,linear-gradient(90deg,#c8dd70 0,#c8dd70 2.0px,#8fa8d8 2.0px,#8fa8d8 100%);opacity:.92;"></div>
<div style="left:823.8px;top:608px;width:1px;height:3px;background:#dae3e7;"></div>
<div style="left:818.9px;top:611.3px;width:9.8px;height:5px;background:#c8dd70;background:repeating-linear-gradient(90deg,rgba(70,90,30,.28) 0,rgba(70,90,30,.28) 1px,transparent 1px,transparent 2.3px) 50% 50%/84% 56% no-repeat,linear-gradient(90deg,#c8dd70 0,#c8dd70 1.7px,#8fa8d8 1.7px,#8fa8d8 100%);opacity:.92;"></div>
<div style="left:834.3px;top:608px;width:1px;height:3px;background:#dae3e7;"></div>
<div style="left:829.4px;top:611.3px;width:9.8px;height:5px;background:#c8dd70;background:repeating-linear-gradient(90deg,rgba(70,90,30,.28) 0,rgba(70,90,30,.28) 1px,transparent 1px,transparent 2.3px) 50% 50%/84% 56% no-repeat,linear-gradient(90deg,#c8dd70 0,#c8dd70 3.1px,#8fa8d8 3.1px,#8fa8d8 100%);opacity:.92;"></div>
<div style="left:844.8px;top:608px;width:1px;height:3px;background:#dae3e7;"></div>
<div style="left:839.9px;top:611.3px;width:9.8px;height:5px;background:#c8dd70;background:repeating-linear-gradient(90deg,rgba(70,90,30,.28) 0,rgba(70,90,30,.28) 1px,transparent 1px,transparent 2.3px) 50% 50%/84% 56% no-repeat,linear-gradient(90deg,#c8dd70 0,#c8dd70 5.3px,#8fa8d8 5.3px,#8fa8d8 100%);opacity:.92;"></div>
<div style="left:855.3px;top:608px;width:1px;height:3px;background:#dae3e7;"></div>
<div style="left:850.4px;top:611.3px;width:9.8px;height:5px;background:#c8dd70;background:repeating-linear-gradient(90deg,rgba(70,90,30,.28) 0,rgba(70,90,30,.28) 1px,transparent 1px,transparent 2.3px) 50% 50%/84% 56% no-repeat,linear-gradient(90deg,#c8dd70 0,#c8dd70 1.8px,#8fa8d8 1.8px,#8fa8d8 100%);opacity:.92;"></div>
<div style="left:865.7px;top:608px;width:1px;height:3px;background:#dae3e7;"></div>
<div style="left:860.8px;top:611.3px;width:9.8px;height:5px;background:#c8dd70;background:repeating-linear-gradient(90deg,rgba(70,90,30,.28) 0,rgba(70,90,30,.28) 1px,transparent 1px,transparent 2.3px) 50% 50%/84% 56% no-repeat,linear-gradient(90deg,#c8dd70 0,#c8dd70 4.4px,#8fa8d8 4.4px,#8fa8d8 100%);opacity:.92;"></div>
<div style="left:876px;top:608px;width:1px;height:3px;background:#dae3e7;"></div>
<div style="left:871.1px;top:611.3px;width:9.8px;height:5px;background:#c8dd70;background:repeating-linear-gradient(90deg,rgba(70,90,30,.28) 0,rgba(70,90,30,.28) 1px,transparent 1px,transparent 2.3px) 50% 50%/84% 56% no-repeat,linear-gradient(90deg,#c8dd70 0,#c8dd70 1.8px,#8fa8d8 1.8px,#8fa8d8 100%);opacity:.92;"></div>
<div style="left:886.2px;top:608px;width:1px;height:3px;background:#dae3e7;"></div>
<div style="left:881.3px;top:611.3px;width:9.8px;height:5px;background:#c8dd70;background:repeating-linear-gradient(90deg,rgba(70,90,30,.28) 0,rgba(70,90,30,.28) 1px,transparent 1px,transparent 2.3px) 50% 50%/84% 56% no-repeat,linear-gradient(90deg,#c8dd70 0,#c8dd70 4.0px,#8fa8d8 4.0px,#8fa8d8 100%);opacity:.92;"></div>
<div style="left:813.3px;top:616.3px;width:1px;height:3.2px;background:#dae3e7;"></div>
<div style="left:807.4px;top:619.5px;width:5.8px;height:1px;background:#dae3e7;"></div>
<div style="left:802.5px;top:622.3px;width:9.8px;height:5px;background:#c8dd70;background:repeating-linear-gradient(90deg,rgba(70,90,30,.28) 0,rgba(70,90,30,.28) 1px,transparent 1px,transparent 2.3px) 50% 50%/84% 56% no-repeat,linear-gradient(90deg,#c8dd70 0,#c8dd70 6.9px,#8fa8d8 6.9px,#8fa8d8 100%);opacity:.92;"></div>
<div style="left:808.1px;top:622.3px;width:9.8px;height:5px;background:#c8dd70;background:repeating-linear-gradient(90deg,rgba(70,90,30,.28) 0,rgba(70,90,30,.28) 1px,transparent 1px,transparent 2.3px) 50% 50%/84% 56% no-repeat,linear-gradient(90deg,#c8dd70 0,#c8dd70 6.9px,#8fa8d8 6.9px,#8fa8d8 100%);opacity:.92;"></div>
<div style="left:834.3px;top:616.3px;width:1px;height:3.2px;background:#dae3e7;"></div>
<div style="left:829.1px;top:619.5px;width:10.5px;height:1px;background:#dae3e7;"></div>
<div style="left:824.2px;top:622.3px;width:9.8px;height:5px;background:#c8dd70;background:repeating-linear-gradient(90deg,rgba(70,90,30,.28) 0,rgba(70,90,30,.28) 1px,transparent 1px,transparent 2.3px) 50% 50%/84% 56% no-repeat,linear-gradient(90deg,#c8dd70 0,#c8dd70 2.9px,#8fa8d8 2.9px,#8fa8d8 100%);opacity:.92;"></div>
<div style="left:834.8px;top:622.3px;width:9.8px;height:5px;background:#c8dd70;background:repeating-linear-gradient(90deg,rgba(70,90,30,.28) 0,rgba(70,90,30,.28) 1px,transparent 1px,transparent 2.3px) 50% 50%/84% 56% no-repeat,linear-gradient(90deg,#c8dd70 0,#c8dd70 4.4px,#8fa8d8 4.4px,#8fa8d8 100%);opacity:.92;"></div>
<div style="left:987px;top:607.5px;width:210.8px;height:1px;background:#dae3e7;"></div>
<div style="left:987px;top:607.5px;width:1px;height:4.5px;background:#dae3e7;"></div>
<div style="left:981.8px;top:612.5px;width:10.4px;height:5px;background:#c8dd70;background:repeating-linear-gradient(90deg,rgba(70,90,30,.28) 0,rgba(70,90,30,.28) 1px,transparent 1px,transparent 2.3px) 50% 50%/84% 56% no-repeat,linear-gradient(90deg,#c8dd70 0,#c8dd70 9.4px,#8fa8d8 9.4px,#8fa8d8 100%);opacity:.92;"></div>
<div style="left:1197.8px;top:607.5px;width:1px;height:3.5px;background:#dae3e7;"></div>
<div style="left:1192.6px;top:611.3px;width:10.4px;height:5px;background:#c8dd70;background:repeating-linear-gradient(90deg,rgba(70,90,30,.28) 0,rgba(70,90,30,.28) 1px,transparent 1px,transparent 2.3px) 50% 50%/84% 56% no-repeat,linear-gradient(90deg,#c8dd70 0,#c8dd70 9.4px,#8fa8d8 9.4px,#8fa8d8 100%);opacity:.92;"></div>
<div style="left:987px;top:617.5px;width:1px;height:3.1px;background:#dae3e7;"></div>
<div style="left:850.6px;top:620.6px;width:273.7px;height:1px;background:#dae3e7;"></div>
<div style="left:850.6px;top:620.6px;width:1px;height:3.3px;background:#dae3e7;"></div>
<div style="left:845.4px;top:623.9px;width:10.4px;height:5px;background:#c8dd70;background:repeating-linear-gradient(90deg,rgba(70,90,30,.28) 0,rgba(70,90,30,.28) 1px,transparent 1px,transparent 2.3px) 50% 50%/84% 56% no-repeat,linear-gradient(90deg,#c8dd70 0,#c8dd70 8.3px,#8fa8d8 8.3px,#8fa8d8 100%);opacity:.92;"></div>
<div style="left:850.6px;top:628.9px;width:1px;height:3.5px;background:#dae3e7;"></div>
<div style="left:893.1px;top:620.6px;width:1px;height:3.3px;background:#dae3e7;"></div>
<div style="left:887.9px;top:623.9px;width:10.4px;height:5px;background:#c8dd70;background:repeating-linear-gradient(90deg,rgba(70,90,30,.28) 0,rgba(70,90,30,.28) 1px,transparent 1px,transparent 2.3px) 50% 50%/84% 56% no-repeat,linear-gradient(90deg,#c8dd70 0,#c8dd70 9.4px,#8fa8d8 9.4px,#8fa8d8 100%);opacity:.92;"></div>
<div style="left:893.1px;top:628.9px;width:1px;height:3.5px;background:#dae3e7;"></div>
<div style="left:970.8px;top:620.6px;width:1px;height:4.4px;background:#dae3e7;"></div>
<div style="left:965.6px;top:625px;width:10.4px;height:5px;background:#c8dd70;background:repeating-linear-gradient(90deg,rgba(70,90,30,.28) 0,rgba(70,90,30,.28) 1px,transparent 1px,transparent 2.3px) 50% 50%/84% 56% no-repeat,linear-gradient(90deg,#c8dd70 0,#c8dd70 9.4px,#8fa8d8 9.4px,#8fa8d8 100%);opacity:.92;"></div>
<div style="left:970.8px;top:630px;width:1px;height:3.5px;background:#dae3e7;"></div>
<div style="left:1066.6px;top:620.6px;width:1px;height:3.1px;background:#dae3e7;"></div>
<div style="left:1061.4px;top:623.7px;width:10.4px;height:5px;background:#c8dd70;background:repeating-linear-gradient(90deg,rgba(70,90,30,.28) 0,rgba(70,90,30,.28) 1px,transparent 1px,transparent 2.3px) 50% 50%/84% 56% no-repeat,linear-gradient(90deg,#c8dd70 0,#c8dd70 9.4px,#8fa8d8 9.4px,#8fa8d8 100%);opacity:.92;"></div>
<div style="left:1066.6px;top:628.7px;width:1px;height:3.5px;background:#dae3e7;"></div>
<div style="left:1124.3px;top:620.6px;width:1px;height:3.1px;background:#dae3e7;"></div>
<div style="left:1119.1px;top:623.7px;width:10.4px;height:5px;background:#c8dd70;background:repeating-linear-gradient(90deg,rgba(70,90,30,.28) 0,rgba(70,90,30,.28) 1px,transparent 1px,transparent 2.3px) 50% 50%/84% 56% no-repeat,linear-gradient(90deg,#c8dd70 0,#c8dd70 6.2px,#8fa8d8 6.2px,#8fa8d8 100%);opacity:.92;"></div>
<div style="left:1124.3px;top:628.7px;width:1px;height:3.5px;background:#dae3e7;"></div>
<div style="left:845.2px;top:632.2px;width:10.8px;height:1px;background:#dae3e7;"></div>
<div style="left:845.2px;top:632.2px;width:1px;height:2.8px;background:#dae3e7;"></div>
<div style="left:840.3px;top:635.3px;width:9.8px;height:5px;background:#c8dd70;background:repeating-linear-gradient(90deg,rgba(70,90,30,.28) 0,rgba(70,90,30,.28) 1px,transparent 1px,transparent 2.3px) 50% 50%/84% 56% no-repeat,linear-gradient(90deg,#c8dd70 0,#c8dd70 7.1px,#8fa8d8 7.1px,#8fa8d8 100%);opacity:.92;"></div>
<div style="left:856px;top:632.2px;width:1px;height:2.8px;background:#dae3e7;"></div>
<div style="left:851.1px;top:635.3px;width:9.8px;height:5px;background:#c8dd70;background:repeating-linear-gradient(90deg,rgba(70,90,30,.28) 0,rgba(70,90,30,.28) 1px,transparent 1px,transparent 2.3px) 50% 50%/84% 56% no-repeat,linear-gradient(90deg,#c8dd70 0,#c8dd70 8.8px,#8fa8d8 8.8px,#8fa8d8 100%);opacity:.92;"></div>
<div style="left:866.7px;top:632.2px;width:53px;height:1px;background:#dae3e7;"></div>
<div style="left:866.7px;top:632.2px;width:1px;height:2.8px;background:#dae3e7;"></div>
<div style="left:861.8px;top:635.3px;width:9.8px;height:5px;background:#c8dd70;background:repeating-linear-gradient(90deg,rgba(70,90,30,.28) 0,rgba(70,90,30,.28) 1px,transparent 1px,transparent 2.3px) 50% 50%/84% 56% no-repeat,linear-gradient(90deg,#c8dd70 0,#c8dd70 8.6px,#8fa8d8 8.6px,#8fa8d8 100%);opacity:.92;"></div>
<div style="left:877.5px;top:632.2px;width:1px;height:2.8px;background:#dae3e7;"></div>
<div style="left:872.6px;top:635.3px;width:9.8px;height:5px;background:#c8dd70;background:repeating-linear-gradient(90deg,rgba(70,90,30,.28) 0,rgba(70,90,30,.28) 1px,transparent 1px,transparent 2.3px) 50% 50%/84% 56% no-repeat,linear-gradient(90deg,#c8dd70 0,#c8dd70 8.6px,#8fa8d8 8.6px,#8fa8d8 100%);opacity:.92;"></div>
<div style="left:888px;top:632.2px;width:1px;height:2.8px;background:#dae3e7;"></div>
<div style="left:883.1px;top:635.3px;width:9.8px;height:5px;background:#c8dd70;background:repeating-linear-gradient(90deg,rgba(70,90,30,.28) 0,rgba(70,90,30,.28) 1px,transparent 1px,transparent 2.3px) 50% 50%/84% 56% no-repeat,linear-gradient(90deg,#c8dd70 0,#c8dd70 8.6px,#8fa8d8 8.6px,#8fa8d8 100%);opacity:.92;"></div>
<div style="left:898.6px;top:632.2px;width:1px;height:2.8px;background:#dae3e7;"></div>
<div style="left:893.7px;top:635.3px;width:9.8px;height:5px;background:#c8dd70;background:repeating-linear-gradient(90deg,rgba(70,90,30,.28) 0,rgba(70,90,30,.28) 1px,transparent 1px,transparent 2.3px) 50% 50%/84% 56% no-repeat,linear-gradient(90deg,#c8dd70 0,#c8dd70 8.6px,#8fa8d8 8.6px,#8fa8d8 100%);opacity:.92;"></div>
<div style="left:909.2px;top:632.2px;width:1px;height:2.8px;background:#dae3e7;"></div>
<div style="left:904.3px;top:635.3px;width:9.8px;height:5px;background:#c8dd70;background:repeating-linear-gradient(90deg,rgba(70,90,30,.28) 0,rgba(70,90,30,.28) 1px,transparent 1px,transparent 2.3px) 50% 50%/84% 56% no-repeat,linear-gradient(90deg,#c8dd70 0,#c8dd70 8.6px,#8fa8d8 8.6px,#8fa8d8 100%);opacity:.92;"></div>
<div style="left:919.8px;top:632.2px;width:1px;height:2.8px;background:#dae3e7;"></div>
<div style="left:914.9px;top:635.3px;width:9.8px;height:5px;background:#c8dd70;background:repeating-linear-gradient(90deg,rgba(70,90,30,.28) 0,rgba(70,90,30,.28) 1px,transparent 1px,transparent 2.3px) 50% 50%/84% 56% no-repeat,linear-gradient(90deg,#c8dd70 0,#c8dd70 8.6px,#8fa8d8 8.6px,#8fa8d8 100%);opacity:.92;"></div>
<div style="left:928px;top:633.5px;width:83.2px;height:1px;background:#dae3e7;"></div>
<div style="left:928px;top:633.5px;width:1px;height:2px;background:#dae3e7;"></div>
<div style="left:923.1px;top:635.7px;width:9.8px;height:5px;background:#c8dd70;background:repeating-linear-gradient(90deg,rgba(70,90,30,.28) 0,rgba(70,90,30,.28) 1px,transparent 1px,transparent 2.3px) 50% 50%/84% 56% no-repeat,linear-gradient(90deg,#c8dd70 0,#c8dd70 8.8px,#8fa8d8 8.8px,#8fa8d8 100%);opacity:.92;"></div>
<div style="left:938.4px;top:633.5px;width:1px;height:2px;background:#dae3e7;"></div>
<div style="left:933.5px;top:635.7px;width:9.8px;height:5px;background:#c8dd70;background:repeating-linear-gradient(90deg,rgba(70,90,30,.28) 0,rgba(70,90,30,.28) 1px,transparent 1px,transparent 2.3px) 50% 50%/84% 56% no-repeat,linear-gradient(90deg,#c8dd70 0,#c8dd70 8.8px,#8fa8d8 8.8px,#8fa8d8 100%);opacity:.92;"></div>
<div style="left:948.8px;top:633.5px;width:1px;height:2px;background:#dae3e7;"></div>
<div style="left:943.9px;top:635.7px;width:9.8px;height:5px;background:#c8dd70;background:repeating-linear-gradient(90deg,rgba(70,90,30,.28) 0,rgba(70,90,30,.28) 1px,transparent 1px,transparent 2.3px) 50% 50%/84% 56% no-repeat,linear-gradient(90deg,#c8dd70 0,#c8dd70 8.8px,#8fa8d8 8.8px,#8fa8d8 100%);opacity:.92;"></div>
<div style="left:959.2px;top:633.5px;width:1px;height:2px;background:#dae3e7;"></div>
<div style="left:954.3px;top:635.7px;width:9.8px;height:5px;background:#c8dd70;background:repeating-linear-gradient(90deg,rgba(70,90,30,.28) 0,rgba(70,90,30,.28) 1px,transparent 1px,transparent 2.3px) 50% 50%/84% 56% no-repeat,linear-gradient(90deg,#c8dd70 0,#c8dd70 8.8px,#8fa8d8 8.8px,#8fa8d8 100%);opacity:.92;"></div>
<div style="left:969.6px;top:633.5px;width:1px;height:2px;background:#dae3e7;"></div>
<div style="left:964.7px;top:635.7px;width:9.8px;height:5px;background:#c8dd70;background:repeating-linear-gradient(90deg,rgba(70,90,30,.28) 0,rgba(70,90,30,.28) 1px,transparent 1px,transparent 2.3px) 50% 50%/84% 56% no-repeat,linear-gradient(90deg,#c8dd70 0,#c8dd70 8.8px,#8fa8d8 8.8px,#8fa8d8 100%);opacity:.92;"></div>
<div style="left:980px;top:633.5px;width:1px;height:2px;background:#dae3e7;"></div>
<div style="left:975.1px;top:635.7px;width:9.8px;height:5px;background:#c8dd70;background:repeating-linear-gradient(90deg,rgba(70,90,30,.28) 0,rgba(70,90,30,.28) 1px,transparent 1px,transparent 2.3px) 50% 50%/84% 56% no-repeat,linear-gradient(90deg,#c8dd70 0,#c8dd70 8.8px,#8fa8d8 8.8px,#8fa8d8 100%);opacity:.92;"></div>
<div style="left:990.4px;top:633.5px;width:1px;height:2px;background:#dae3e7;"></div>
<div style="left:985.5px;top:635.7px;width:9.8px;height:5px;background:#c8dd70;background:repeating-linear-gradient(90deg,rgba(70,90,30,.28) 0,rgba(70,90,30,.28) 1px,transparent 1px,transparent 2.3px) 50% 50%/84% 56% no-repeat,linear-gradient(90deg,#c8dd70 0,#c8dd70 8.8px,#8fa8d8 8.8px,#8fa8d8 100%);opacity:.92;"></div>
<div style="left:1000.8px;top:633.5px;width:1px;height:2px;background:#dae3e7;"></div>
<div style="left:995.9px;top:635.7px;width:9.8px;height:5px;background:#c8dd70;background:repeating-linear-gradient(90deg,rgba(70,90,30,.28) 0,rgba(70,90,30,.28) 1px,transparent 1px,transparent 2.3px) 50% 50%/84% 56% no-repeat,linear-gradient(90deg,#c8dd70 0,#c8dd70 8.8px,#8fa8d8 8.8px,#8fa8d8 100%);opacity:.92;"></div>
<div style="left:1011.2px;top:633.5px;width:1px;height:2px;background:#dae3e7;"></div>
<div style="left:1006.3px;top:635.7px;width:9.8px;height:5px;background:#c8dd70;background:repeating-linear-gradient(90deg,rgba(70,90,30,.28) 0,rgba(70,90,30,.28) 1px,transparent 1px,transparent 2.3px) 50% 50%/84% 56% no-repeat,linear-gradient(90deg,#c8dd70 0,#c8dd70 8.8px,#8fa8d8 8.8px,#8fa8d8 100%);opacity:.92;"></div>
<div style="left:1025.5px;top:632.5px;width:83.6px;height:1px;background:#dae3e7;"></div>
<div style="left:1025.5px;top:632.5px;width:1px;height:2.5px;background:#dae3e7;"></div>
<div style="left:1020.6px;top:635.3px;width:9.8px;height:5px;background:#c8dd70;background:repeating-linear-gradient(90deg,rgba(70,90,30,.28) 0,rgba(70,90,30,.28) 1px,transparent 1px,transparent 2.3px) 50% 50%/84% 56% no-repeat,linear-gradient(90deg,#c8dd70 0,#c8dd70 8.8px,#8fa8d8 8.8px,#8fa8d8 100%);opacity:.92;"></div>
<div style="left:1036px;top:632.5px;width:1px;height:2.5px;background:#dae3e7;"></div>
<div style="left:1031px;top:635.3px;width:9.8px;height:5px;background:#c8dd70;background:repeating-linear-gradient(90deg,rgba(70,90,30,.28) 0,rgba(70,90,30,.28) 1px,transparent 1px,transparent 2.3px) 50% 50%/84% 56% no-repeat,linear-gradient(90deg,#c8dd70 0,#c8dd70 8.8px,#8fa8d8 8.8px,#8fa8d8 100%);opacity:.92;"></div>
<div style="left:1046.4px;top:632.5px;width:1px;height:2.5px;background:#dae3e7;"></div>
<div style="left:1041.5px;top:635.3px;width:9.8px;height:5px;background:#c8dd70;background:repeating-linear-gradient(90deg,rgba(70,90,30,.28) 0,rgba(70,90,30,.28) 1px,transparent 1px,transparent 2.3px) 50% 50%/84% 56% no-repeat,linear-gradient(90deg,#c8dd70 0,#c8dd70 8.8px,#8fa8d8 8.8px,#8fa8d8 100%);opacity:.92;"></div>
<div style="left:1056.8px;top:632.5px;width:1px;height:2.5px;background:#dae3e7;"></div>
<div style="left:1051.9px;top:635.3px;width:9.8px;height:5px;background:#c8dd70;background:repeating-linear-gradient(90deg,rgba(70,90,30,.28) 0,rgba(70,90,30,.28) 1px,transparent 1px,transparent 2.3px) 50% 50%/84% 56% no-repeat,linear-gradient(90deg,#c8dd70 0,#c8dd70 8.8px,#8fa8d8 8.8px,#8fa8d8 100%);opacity:.92;"></div>
<div style="left:1067.3px;top:632.5px;width:1px;height:2.5px;background:#dae3e7;"></div>
<div style="left:1062.4px;top:635.3px;width:9.8px;height:5px;background:#c8dd70;background:repeating-linear-gradient(90deg,rgba(70,90,30,.28) 0,rgba(70,90,30,.28) 1px,transparent 1px,transparent 2.3px) 50% 50%/84% 56% no-repeat,linear-gradient(90deg,#c8dd70 0,#c8dd70 8.8px,#8fa8d8 8.8px,#8fa8d8 100%);opacity:.92;"></div>
<div style="left:1077.8px;top:632.5px;width:1px;height:2.5px;background:#dae3e7;"></div>
<div style="left:1072.8px;top:635.3px;width:9.8px;height:5px;background:#c8dd70;background:repeating-linear-gradient(90deg,rgba(70,90,30,.28) 0,rgba(70,90,30,.28) 1px,transparent 1px,transparent 2.3px) 50% 50%/84% 56% no-repeat,linear-gradient(90deg,#c8dd70 0,#c8dd70 8.8px,#8fa8d8 8.8px,#8fa8d8 100%);opacity:.92;"></div>
<div style="left:1088.2px;top:632.5px;width:1px;height:2.5px;background:#dae3e7;"></div>
<div style="left:1083.3px;top:635.3px;width:9.8px;height:5px;background:#c8dd70;background:repeating-linear-gradient(90deg,rgba(70,90,30,.28) 0,rgba(70,90,30,.28) 1px,transparent 1px,transparent 2.3px) 50% 50%/84% 56% no-repeat,linear-gradient(90deg,#c8dd70 0,#c8dd70 8.8px,#8fa8d8 8.8px,#8fa8d8 100%);opacity:.92;"></div>
<div style="left:1098.7px;top:632.5px;width:1px;height:2.5px;background:#dae3e7;"></div>
<div style="left:1093.8px;top:635.3px;width:9.8px;height:5px;background:#c8dd70;background:repeating-linear-gradient(90deg,rgba(70,90,30,.28) 0,rgba(70,90,30,.28) 1px,transparent 1px,transparent 2.3px) 50% 50%/84% 56% no-repeat,linear-gradient(90deg,#c8dd70 0,#c8dd70 8.8px,#8fa8d8 8.8px,#8fa8d8 100%);opacity:.92;"></div>
<div style="left:1109.1px;top:632.5px;width:1px;height:2.5px;background:#dae3e7;"></div>
<div style="left:1104.2px;top:635.3px;width:9.8px;height:5px;background:#c8dd70;background:repeating-linear-gradient(90deg,rgba(70,90,30,.28) 0,rgba(70,90,30,.28) 1px,transparent 1px,transparent 2.3px) 50% 50%/84% 56% no-repeat,linear-gradient(90deg,#c8dd70 0,#c8dd70 8.8px,#8fa8d8 8.8px,#8fa8d8 100%);opacity:.92;"></div>
<div style="left:1119px;top:632px;width:10.5px;height:1px;background:#dae3e7;"></div>
<div style="left:1115.5px;top:634px;width:7px;height:3px;background:transparent;border:1px solid #dde5e8;border-radius:50%;box-sizing:border-box;"></div>
<div style="left:1119px;top:632px;width:1px;height:9.1px;background:#dae3e7;"></div>
<div style="left:1114.1px;top:641.1px;width:9.8px;height:5px;background:#c8dd70;background:repeating-linear-gradient(90deg,rgba(70,90,30,.28) 0,rgba(70,90,30,.28) 1px,transparent 1px,transparent 2.3px) 50% 50%/84% 56% no-repeat,linear-gradient(90deg,#c8dd70 0,#c8dd70 8.8px,#8fa8d8 8.8px,#8fa8d8 100%);opacity:.92;"></div>
<div style="left:1126.3px;top:634px;width:7px;height:3px;background:transparent;border:1px solid #dde5e8;border-radius:50%;box-sizing:border-box;"></div>
<div style="left:1129.8px;top:632px;width:1px;height:7.8px;background:#dae3e7;"></div>
<div style="left:1124.9px;top:639.8px;width:9.8px;height:5px;background:#c8dd70;background:repeating-linear-gradient(90deg,rgba(70,90,30,.28) 0,rgba(70,90,30,.28) 1px,transparent 1px,transparent 2.3px) 50% 50%/84% 56% no-repeat,linear-gradient(90deg,#c8dd70 0,#c8dd70 5.4px,#8fa8d8 5.4px,#8fa8d8 100%);opacity:.92;"></div>
<div style="left:1197.8px;top:616.3px;width:1px;height:3.1px;background:#dae3e7;"></div>
<div style="left:1144px;top:619.4px;width:104px;height:1px;background:#dae3e7;"></div>
<div style="left:1144px;top:619.4px;width:1px;height:2.2px;background:#dae3e7;"></div>
<div style="left:1138.8px;top:621.7px;width:10.4px;height:5px;background:#c8dd70;background:repeating-linear-gradient(90deg,rgba(70,90,30,.28) 0,rgba(70,90,30,.28) 1px,transparent 1px,transparent 2.3px) 50% 50%/84% 56% no-repeat,linear-gradient(90deg,#c8dd70 0,#c8dd70 9.4px,#8fa8d8 9.4px,#8fa8d8 100%);opacity:.92;"></div>
<div style="left:1155px;top:619.4px;width:1px;height:2.2px;background:#dae3e7;"></div>
<div style="left:1149.8px;top:621.7px;width:10.4px;height:5px;background:#c8dd70;background:repeating-linear-gradient(90deg,rgba(70,90,30,.28) 0,rgba(70,90,30,.28) 1px,transparent 1px,transparent 2.3px) 50% 50%/84% 56% no-repeat,linear-gradient(90deg,#c8dd70 0,#c8dd70 9.4px,#8fa8d8 9.4px,#8fa8d8 100%);opacity:.92;"></div>
<div style="left:1166px;top:619.4px;width:1px;height:2.2px;background:#dae3e7;"></div>
<div style="left:1160.8px;top:621.7px;width:10.4px;height:5px;background:#c8dd70;background:repeating-linear-gradient(90deg,rgba(70,90,30,.28) 0,rgba(70,90,30,.28) 1px,transparent 1px,transparent 2.3px) 50% 50%/84% 56% no-repeat,linear-gradient(90deg,#c8dd70 0,#c8dd70 9.4px,#8fa8d8 9.4px,#8fa8d8 100%);opacity:.92;"></div>
<div style="left:1191.8px;top:619.4px;width:1px;height:2.2px;background:#dae3e7;"></div>
<div style="left:1186.6px;top:621.7px;width:10.4px;height:5px;background:#c8dd70;background:repeating-linear-gradient(90deg,rgba(70,90,30,.28) 0,rgba(70,90,30,.28) 1px,transparent 1px,transparent 2.3px) 50% 50%/84% 56% no-repeat,linear-gradient(90deg,#c8dd70 0,#c8dd70 9.4px,#8fa8d8 9.4px,#8fa8d8 100%);opacity:.92;"></div>
<div style="left:1224.7px;top:619.4px;width:1px;height:2.2px;background:#dae3e7;"></div>
<div style="left:1219.5px;top:621.7px;width:10.4px;height:5px;background:#c8dd70;background:repeating-linear-gradient(90deg,rgba(70,90,30,.28) 0,rgba(70,90,30,.28) 1px,transparent 1px,transparent 2.3px) 50% 50%/84% 56% no-repeat,linear-gradient(90deg,#c8dd70 0,#c8dd70 9.4px,#8fa8d8 9.4px,#8fa8d8 100%);opacity:.92;"></div>
<div style="left:1249px;top:619.4px;width:1px;height:2.2px;background:#dae3e7;"></div>
<div style="left:1243.8px;top:621.7px;width:10.4px;height:5px;background:#c8dd70;background:repeating-linear-gradient(90deg,rgba(70,90,30,.28) 0,rgba(70,90,30,.28) 1px,transparent 1px,transparent 2.3px) 50% 50%/84% 56% no-repeat,linear-gradient(90deg,#c8dd70 0,#c8dd70 9.4px,#8fa8d8 9.4px,#8fa8d8 100%);opacity:.92;"></div>
<div style="left:1134.9px;top:647.1px;width:9.8px;height:5px;background:#c8dd70;background:repeating-linear-gradient(90deg,rgba(70,90,30,.28) 0,rgba(70,90,30,.28) 1px,transparent 1px,transparent 2.3px) 50% 50%/84% 56% no-repeat,linear-gradient(90deg,#c8dd70 0,#c8dd70 8.8px,#8fa8d8 8.8px,#8fa8d8 100%);opacity:.92;"></div>
<div style="left:1136.3px;top:631px;width:7px;height:3.4px;background:transparent;border:1px solid #dde5e8;border-radius:50%;box-sizing:border-box;"></div>
<div style="left:1136.3px;top:638px;width:7px;height:3.4px;background:transparent;border:1px solid #dde5e8;border-radius:50%;box-sizing:border-box;"></div>
<div style="left:1139.8px;top:627px;width:1px;height:20px;background:#dae3e7;"></div>
<div style="left:1145.1px;top:632.3px;width:9.8px;height:5px;background:#c8dd70;background:repeating-linear-gradient(90deg,rgba(70,90,30,.28) 0,rgba(70,90,30,.28) 1px,transparent 1px,transparent 2.3px) 50% 50%/84% 56% no-repeat,linear-gradient(90deg,#c8dd70 0,#c8dd70 8.8px,#8fa8d8 8.8px,#8fa8d8 100%);opacity:.92;"></div>
<div style="left:1156.1px;top:647.1px;width:9.8px;height:5px;background:#c8dd70;background:repeating-linear-gradient(90deg,rgba(70,90,30,.28) 0,rgba(70,90,30,.28) 1px,transparent 1px,transparent 2.3px) 50% 50%/84% 56% no-repeat,linear-gradient(90deg,#c8dd70 0,#c8dd70 8.8px,#8fa8d8 8.8px,#8fa8d8 100%);opacity:.92;"></div>
<div style="left:1157.5px;top:631px;width:7px;height:3.4px;background:transparent;border:1px solid #dde5e8;border-radius:50%;box-sizing:border-box;"></div>
<div style="left:1157.5px;top:638px;width:7px;height:3.4px;background:transparent;border:1px solid #dde5e8;border-radius:50%;box-sizing:border-box;"></div>
<div style="left:1161px;top:627px;width:1px;height:20px;background:#dae3e7;"></div>
<div style="left:1167px;top:631px;width:68px;height:1px;background:#dae3e7;"></div>
<div style="left:1172px;top:631px;width:1px;height:1.5px;background:#dae3e7;"></div>
<div style="left:1167.1px;top:632.3px;width:9.8px;height:5px;background:#c8dd70;background:repeating-linear-gradient(90deg,rgba(70,90,30,.28) 0,rgba(70,90,30,.28) 1px,transparent 1px,transparent 2.3px) 50% 50%/84% 56% no-repeat,linear-gradient(90deg,#c8dd70 0,#c8dd70 8.8px,#8fa8d8 8.8px,#8fa8d8 100%);opacity:.92;"></div>
<div style="left:1182.5px;top:631px;width:1px;height:1.5px;background:#dae3e7;"></div>
<div style="left:1177.6px;top:632.3px;width:9.8px;height:5px;background:#c8dd70;background:repeating-linear-gradient(90deg,rgba(70,90,30,.28) 0,rgba(70,90,30,.28) 1px,transparent 1px,transparent 2.3px) 50% 50%/84% 56% no-repeat,linear-gradient(90deg,#c8dd70 0,#c8dd70 8.8px,#8fa8d8 8.8px,#8fa8d8 100%);opacity:.92;"></div>
<div style="left:1193px;top:631px;width:1px;height:1.5px;background:#dae3e7;"></div>
<div style="left:1188.1px;top:632.3px;width:9.8px;height:5px;background:#c8dd70;background:repeating-linear-gradient(90deg,rgba(70,90,30,.28) 0,rgba(70,90,30,.28) 1px,transparent 1px,transparent 2.3px) 50% 50%/84% 56% no-repeat,linear-gradient(90deg,#c8dd70 0,#c8dd70 8.8px,#8fa8d8 8.8px,#8fa8d8 100%);opacity:.92;"></div>
<div style="left:1203.5px;top:631px;width:1px;height:1.5px;background:#dae3e7;"></div>
<div style="left:1198.6px;top:632.3px;width:9.8px;height:5px;background:#c8dd70;background:repeating-linear-gradient(90deg,rgba(70,90,30,.28) 0,rgba(70,90,30,.28) 1px,transparent 1px,transparent 2.3px) 50% 50%/84% 56% no-repeat,linear-gradient(90deg,#c8dd70 0,#c8dd70 8.8px,#8fa8d8 8.8px,#8fa8d8 100%);opacity:.92;"></div>
<div style="left:1214px;top:631px;width:1px;height:1.5px;background:#dae3e7;"></div>
<div style="left:1209.1px;top:632.3px;width:9.8px;height:5px;background:#c8dd70;background:repeating-linear-gradient(90deg,rgba(70,90,30,.28) 0,rgba(70,90,30,.28) 1px,transparent 1px,transparent 2.3px) 50% 50%/84% 56% no-repeat,linear-gradient(90deg,#c8dd70 0,#c8dd70 8.8px,#8fa8d8 8.8px,#8fa8d8 100%);opacity:.92;"></div>
<div style="left:1224.5px;top:631px;width:1px;height:1.5px;background:#dae3e7;"></div>
<div style="left:1219.6px;top:632.3px;width:9.8px;height:5px;background:#c8dd70;background:repeating-linear-gradient(90deg,rgba(70,90,30,.28) 0,rgba(70,90,30,.28) 1px,transparent 1px,transparent 2.3px) 50% 50%/84% 56% no-repeat,linear-gradient(90deg,#c8dd70 0,#c8dd70 8.8px,#8fa8d8 8.8px,#8fa8d8 100%);opacity:.92;"></div>
<div style="left:1235px;top:631px;width:1px;height:1.5px;background:#dae3e7;"></div>
<div style="left:1230.1px;top:632.3px;width:9.8px;height:5px;background:#c8dd70;background:repeating-linear-gradient(90deg,rgba(70,90,30,.28) 0,rgba(70,90,30,.28) 1px,transparent 1px,transparent 2.3px) 50% 50%/84% 56% no-repeat,linear-gradient(90deg,#c8dd70 0,#c8dd70 8.8px,#8fa8d8 8.8px,#8fa8d8 100%);opacity:.92;"></div>
<div style="left:1238.1px;top:634px;width:9.8px;height:5px;background:#c8dd70;background:repeating-linear-gradient(90deg,rgba(70,90,30,.28) 0,rgba(70,90,30,.28) 1px,transparent 1px,transparent 2.3px) 50% 50%/84% 56% no-repeat,linear-gradient(90deg,#c8dd70 0,#c8dd70 8.8px,#8fa8d8 8.8px,#8fa8d8 100%);opacity:.92;"></div>
<div style="left:811px;top:586px;width:119.5px;height:57.5px;background:transparent;box-sizing:border-box;border:2px solid #e01818;"></div>
<div style="left:1244px;top:635.5px;width:8px;height:20px;background:#ffffff;box-sizing:border-box;border:1.5px solid #2f4f85;"></div>
<div style="left:1246px;top:640px;width:4px;height:6px;overflow:hidden;font:9px/6px 'Liberation Sans',sans-serif;color:#333">&#9664;</div>
<div style="left:614px;top:654.2px;width:634px;height:2px;background:#7d7d7d;"></div>
<div style="left:3px;top:656.5px;width:1245px;height:15.5px;background:#f0f0f0;"></div>
<div style="left:384px;top:657px;width:222.7px;height:13.5px;background:#cdcdcd;"></div>
<svg style="left:8px;top:659px" width="7" height="10" viewBox="0 0 7 10"><path d="M5.6 1.2 L1.6 5 L5.6 8.8" fill="none" stroke="#3c3c3c" stroke-width="1.6"/></svg>
<div style="left:3px;top:672px;width:1245px;height:23.5px;background:#ffffff;"></div>
<div style="left:7.5px;top:674.2px;width:31.3px;height:19.2px;background:#bcdaf5;box-sizing:border-box;border:1px solid #94bfe9;"></div>
<div style="left:97px;top:676.5px;width:1px;height:14px;background:#c9c9d2;"></div>
<div style="left:163px;top:676.5px;width:1px;height:14px;background:#c9c9d2;"></div>
<div style="left:234.5px;top:676.5px;width:1px;height:14px;background:#c9c9d2;"></div>
<div style="left:311.5px;top:676.5px;width:1px;height:14px;background:#c9c9d2;"></div>
<div style="left:348.5px;top:676.5px;width:1px;height:14px;background:#c9c9d2;"></div>
<div style="left:423px;top:676.5px;width:1px;height:14px;background:#c9c9d2;"></div>
<div style="left:569.3px;top:676.5px;width:1px;height:14px;background:#c9c9d2;"></div>
<div style="left:646.4px;top:676.5px;width:1px;height:14px;background:#c9c9d2;"></div>
<div style="left:0px;top:695.5px;width:1248px;height:2.7px;background:#2d6cbd;"></div>
<div style="left:0px;top:0px;width:1248px;height:22px;background:#2f6fc2;"></div>
<div style="left:0px;top:21px;width:1248px;height:1px;background:#2a66b6;"></div>
<div style="left:3px;top:22px;width:1245px;height:1.2px;background:#e3e7ee;"></div>
<div style="left:0px;top:0px;width:2.2px;height:695.6px;background:#1b3669;"></div>
<div style="left:2.2px;top:22px;width:0.9px;height:673.5px;background:#dfe6f5;"></div>
<svg style="left:7.5px;top:6.3px" width="15" height="14" viewBox="0 0 15 14">
<path d="M4.5 2.8 V1.2 H10.5 V2.8" fill="none" stroke="#f1ead8" stroke-width="1.3"/>
<rect x="0.6" y="2.6" width="13.8" height="10.6" fill="#3f78c6" stroke="#cdd3df" stroke-width="1.1"/>
<rect x="1.2" y="3.2" width="12.6" height="3.4" fill="#8c7a62"/>
<path d="M1.2 6.6 H13.8" stroke="#d9d0bd" stroke-width="0.9"/>
<rect x="5.6" y="5.6" width="3.8" height="3" fill="#101010"/>
</svg>
<svg style="left:113.2px;top:9.4px" width="8" height="8" viewBox="0 0 8 8"><path d="M0.8 0.8 L7.2 7.2 M7.2 0.8 L0.8 7.2" stroke="#4e5b8e" stroke-width="2"/></svg>
<div style="left:132px;top:1.5px;width:237px;height:21.5px;background:#fff0c4;border-radius:3.5px 3.5px 0 0;background:linear-gradient(180deg,#fffdf6 0,#fff3d3 45%,#ffe9ae 100%);"></div>
<svg style="left:135px;top:6.5px" width="17" height="11" viewBox="0 0 17 11">
<path d="M8.4 2 L3.4 8.6 M8.6 2 L13.4 8.6" stroke="#222" stroke-width="1.1" fill="none"/>
<rect x="5.8" y="0.3" width="5.6" height="3" rx="1.2" fill="#050505"/>
<rect x="0.2" y="7.3" width="6.2" height="3.3" rx="1.3" fill="#050505"/>
<rect x="10.5" y="7.3" width="6.2" height="3.3" rx="1.3" fill="#050505"/>
</svg>
<svg style="left:352px;top:9.3px" width="9" height="9" viewBox="0 0 9 9"><path d="M1.2 1.2 L7.8 7.8 M7.8 1.2 L1.2 7.8" stroke="#26262e" stroke-width="1.9"/></svg>
<span class="t" style="left:11.9px;top:676.6px;font-size:12px;letter-spacing:-0.76px;color:#24242e;-webkit-text-stroke-width:0.1px;">Tree</span>
<span class="t" style="left:45.0px;top:676.6px;font-size:12px;letter-spacing:-0.55px;color:#24242e;-webkit-text-stroke-width:0.1px;">Tree Map</span>
<span class="t" style="left:103.5px;top:676.6px;font-size:12px;letter-spacing:-0.43px;color:#24242e;-webkit-text-stroke-width:0.1px;">Node Data</span>
<span class="t" style="left:169.7px;top:676.6px;font-size:12px;letter-spacing:-0.34px;color:#24242e;-webkit-text-stroke-width:0.1px;">Split Report</span>
<span class="t" style="left:241.2px;top:676.6px;font-size:12px;letter-spacing:-0.36px;color:#24242e;-webkit-text-stroke-width:0.1px;">Node Report</span>
<span class="t" style="left:317.2px;top:676.6px;font-size:12px;letter-spacing:-0.65px;color:#24242e;-webkit-text-stroke-width:0.1px;">Chart</span>
<span class="t" style="left:355.8px;top:676.6px;font-size:12px;letter-spacing:-0.36px;color:#24242e;-webkit-text-stroke-width:0.1px;">Profile Chart</span>
<span class="t" style="left:430.8px;top:676.6px;font-size:12px;letter-spacing:-0.34px;color:#24242e;-webkit-text-stroke-width:0.1px;">Parameters and Attributes</span>
<span class="t" style="left:576.0px;top:676.6px;font-size:12px;letter-spacing:-0.72px;color:#24242e;-webkit-text-stroke-width:0.1px;">Saved Charts</span>
<span class="t" style="left:22.7px;top:5.6px;font-size:11px;letter-spacing:-0.10px;color:#eef3fc;">[BankMarketing]</span>
<span class="t" style="left:151.0px;top:5.6px;font-size:11px;letter-spacing:-0.15px;color:#1a1408;">[BankMarketing].[_Train_DecisionTree]</span>
</div></body></html>
